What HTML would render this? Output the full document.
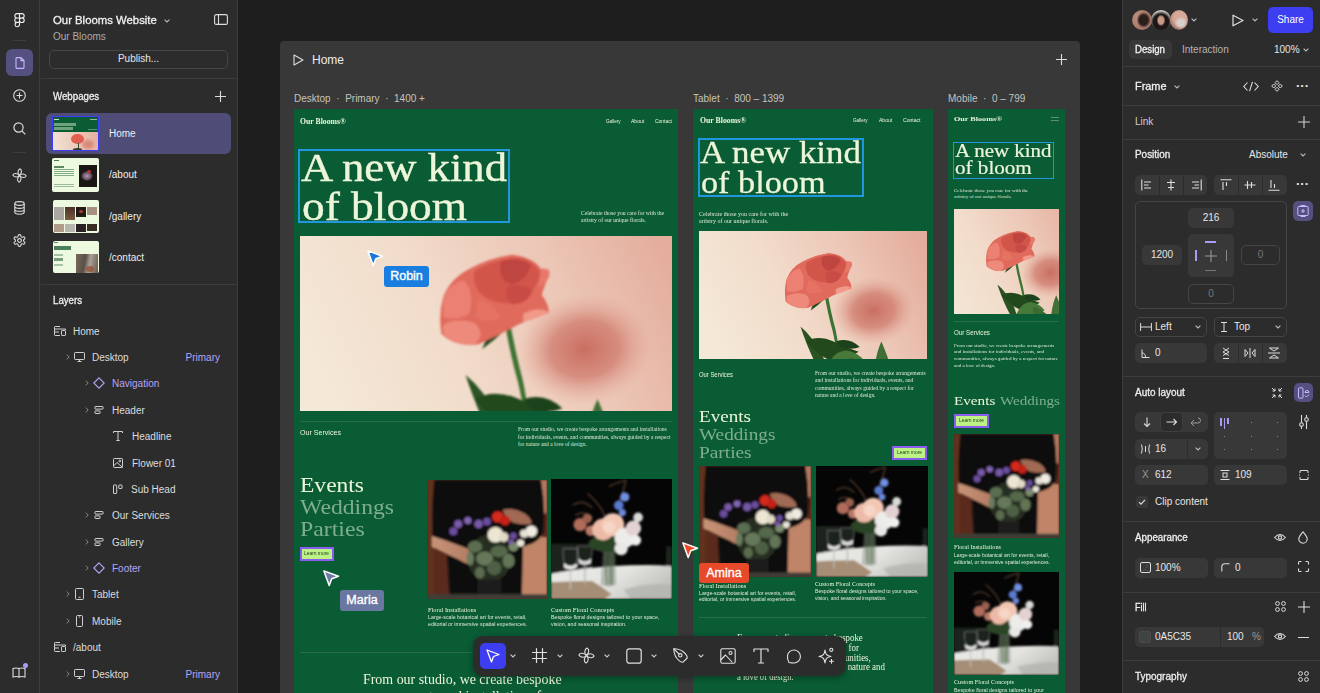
<!DOCTYPE html>
<html><head><meta charset="utf-8">
<style>
*{margin:0;padding:0;box-sizing:border-box}
html,body{width:1320px;height:693px;overflow:hidden;background:#1e1e1e;font-family:"Liberation Sans",sans-serif;color:#e6e6e6}
.a{position:absolute}
.t{position:absolute;white-space:nowrap;line-height:1}
svg{position:absolute;overflow:visible}
.serif{font-family:"Liberation Serif",serif}
/* panels */
#rail{left:0;top:0;width:40px;height:693px;background:#2c2c2c;border-right:1px solid #3c3c3c}
#lp{left:40px;top:0;width:198px;height:693px;background:#2c2c2c;border-right:1px solid #3c3c3c}
#rp{left:1122px;top:0;width:198px;height:693px;background:#2c2c2c;border-left:1px solid #3c3c3c}
.hl{position:absolute;height:1px;background:#3c3c3c}
.lbl{font-size:10px;color:#e6e6e6}
.box{position:absolute;background:#383838;border-radius:5px}
.obox{position:absolute;border:1px solid #444;border-radius:5px}
/* canvas */
#home{left:280px;top:41px;width:800px;height:660px;background:#383838;border-radius:4px}
.frame{position:absolute;background:#0a5c35;overflow:hidden}
.cream{color:#eef5dc}
.sel{position:absolute;border:2px solid #2490d8}
</style></head><body>

<!-- ============ LEFT RAIL ============ -->
<div id="rail" class="a">
 <svg style="left:14px;top:13px" width="11" height="15" viewBox="0 0 11 15" fill="none" stroke="#eee" stroke-width="1.1">
  <path d="M5.5 0.6H3A2.2 2.2 0 0 0 3 5H5.5ZM5.5 0.6H8A2.2 2.2 0 0 1 8 5H5.5ZM5.5 5H3A2.2 2.2 0 0 0 3 9.4H5.5ZM5.5 9.4H3A2.2 2.2 0 1 0 5.5 11.6ZM5.5 7.2A2.2 2.2 0 1 0 10.2 7.2A2.2 2.2 0 1 0 5.5 7.2Z"/>
 </svg>
 <div class="a" style="left:13px;top:40px;width:13px;height:1px;background:#3d3d3d"></div>
 <div class="a" style="left:6px;top:49px;width:27px;height:27px;background:#545180;border-radius:6px"></div>
 <svg style="left:15px;top:57px" width="10" height="12" viewBox="0 0 10 12" fill="none" stroke="#c7b6ff" stroke-width="1.1"><path d="M1 1.5Q1 .6 2 .6H6L9 3.6V10.4Q9 11.4 8 11.4H2Q1 11.4 1 10.4Z M6 .6V3.6H9"/></svg>
 <svg style="left:13px;top:89px" width="13" height="13" viewBox="0 0 13 13" fill="none" stroke="#ddd" stroke-width="1.1"><circle cx="6.5" cy="6.5" r="5.8"/><path d="M6.5 3.5V9.5M3.5 6.5H9.5"/></svg>
 <svg style="left:13px;top:122px" width="13" height="13" viewBox="0 0 13 13" fill="none" stroke="#ddd" stroke-width="1.2"><circle cx="5.5" cy="5.5" r="4.6"/><path d="M8.8 8.8L12.3 12.3"/></svg>
 <div class="a" style="left:13px;top:152px;width:13px;height:1px;background:#3d3d3d"></div>
 <svg style="left:12px;top:168px" width="15" height="15" viewBox="0 0 15 15" fill="none" stroke="#ddd" stroke-width="1.1" stroke-linejoin="round"><path d="M7.5 7.5C5.3 5.8 5.6 2 7.9 .8C10.2 1.8 9.8 5.6 7.5 7.5Z" transform="rotate(0 7.5 7.5)"/><path d="M7.5 7.5C5.3 5.8 5.6 2 7.9 .8C10.2 1.8 9.8 5.6 7.5 7.5Z" transform="rotate(90 7.5 7.5)"/><path d="M7.5 7.5C5.3 5.8 5.6 2 7.9 .8C10.2 1.8 9.8 5.6 7.5 7.5Z" transform="rotate(180 7.5 7.5)"/><path d="M7.5 7.5C5.3 5.8 5.6 2 7.9 .8C10.2 1.8 9.8 5.6 7.5 7.5Z" transform="rotate(270 7.5 7.5)"/></svg>
 <svg style="left:14px;top:201px" width="11" height="14" viewBox="0 0 11 14" fill="none" stroke="#ddd" stroke-width="1.1"><ellipse cx="5.5" cy="2.5" rx="4.7" ry="1.9"/><path d="M.8 2.5V11.3C.8 12.4 3 13.2 5.5 13.2S10.2 12.4 10.2 11.3V2.5M.8 5.5C.8 6.6 3 7.4 5.5 7.4S10.2 6.6 10.2 5.5M.8 8.4C.8 9.5 3 10.3 5.5 10.3S10.2 9.5 10.2 8.4"/></svg>
 <svg style="left:13px;top:234px" width="13" height="13" viewBox="0 0 13 13" fill="none" stroke="#ddd" stroke-width="1.1" stroke-linejoin="round"><circle cx="6.5" cy="6.5" r="1.9"/><path d="M6.50 0.55L6.81 0.58L7.11 0.68L7.40 0.84L7.65 1.09L7.79 1.67L7.88 2.25L8.03 2.51L8.19 2.71L8.35 2.87L8.52 2.99L8.72 3.08L8.94 3.15L9.19 3.18L9.49 3.18L10.04 2.96L10.61 2.80L10.95 2.90L11.24 3.06L11.47 3.27L11.65 3.52L11.78 3.81L11.85 4.12L11.85 4.45L11.76 4.79L11.33 5.21L10.87 5.57L10.72 5.83L10.62 6.07L10.57 6.29L10.55 6.50L10.57 6.71L10.62 6.93L10.72 7.17L10.87 7.43L11.33 7.79L11.76 8.21L11.85 8.55L11.85 8.88L11.78 9.19L11.65 9.47L11.47 9.73L11.24 9.94L10.95 10.10L10.61 10.20L10.04 10.04L9.49 9.82L9.19 9.82L8.94 9.85L8.72 9.92L8.52 10.01L8.35 10.13L8.19 10.29L8.03 10.49L7.88 10.75L7.79 11.33L7.65 11.91L7.40 12.16L7.11 12.32L6.81 12.42L6.50 12.45L6.19 12.42L5.89 12.32L5.60 12.16L5.35 11.91L5.21 11.33L5.12 10.75L4.97 10.49L4.81 10.29L4.65 10.13L4.48 10.01L4.28 9.92L4.06 9.85L3.81 9.82L3.51 9.82L2.96 10.04L2.39 10.20L2.05 10.10L1.76 9.94L1.53 9.73L1.35 9.48L1.22 9.19L1.15 8.88L1.15 8.55L1.24 8.21L1.67 7.79L2.13 7.43L2.28 7.17L2.38 6.93L2.43 6.71L2.45 6.50L2.43 6.29L2.38 6.07L2.28 5.83L2.13 5.57L1.67 5.21L1.24 4.79L1.15 4.45L1.15 4.12L1.22 3.81L1.35 3.52L1.53 3.27L1.76 3.06L2.05 2.90L2.39 2.80L2.96 2.96L3.51 3.18L3.81 3.18L4.06 3.15L4.28 3.08L4.48 2.99L4.65 2.87L4.81 2.71L4.97 2.51L5.12 2.25L5.21 1.67L5.35 1.09L5.60 0.84L5.89 0.68L6.19 0.58Z"/></svg>
 <svg style="left:12px;top:666px" width="15" height="12" viewBox="0 0 15 12" fill="none" stroke="#ddd" stroke-width="1.1"><path d="M1 2.5Q4 1.5 7 2.5V11Q4 10 1 11ZM7 2.5Q10 1.5 13 2.5V11Q10 10 7 11Z"/></svg>
 <div class="a" style="left:23px;top:663px;width:5px;height:5px;border-radius:50%;background:#a99cf5"></div>
</div>

<!-- ============ LEFT PANEL ============ -->
<div id="lp" class="a"></div>
<div class="t" style="left:53px;top:15px;font-size:11px;font-weight:normal;-webkit-text-stroke:.3px currentColor;color:#f0f0f0;transform:scaleX(1.031);transform-origin:0 50%;">Our Blooms Website</div>
<svg style="left:164px;top:19px" width="6" height="4" viewBox="0 0 6 4" fill="none" stroke="#bbb" stroke-width="1.1"><path d="M.6 .6L3 3L5.4 .6"/></svg>
<svg style="left:214px;top:14px" width="14" height="11" viewBox="0 0 14 11" fill="none" stroke="#ddd" stroke-width="1.1"><rect x=".6" y=".6" width="12.8" height="9.8" rx="1.5"/><path d="M4.5 .6V10.4"/></svg>
<div class="t" style="left:53px;top:32px;font-size:10px;color:#aaa">Our Blooms</div>
<div class="obox" style="left:49px;top:50px;width:179px;height:19px;border-color:#474747"></div>
<div class="t" style="left:49px;top:54px;width:179px;text-align:center;font-size:10px;color:#e8e8e8">Publish...</div>
<div class="hl" style="left:41px;top:78px;width:197px"></div>
<div class="t" style="left:53px;top:92px;font-size:10px;font-weight:normal;-webkit-text-stroke:.3px currentColor;color:#eee;transform:scaleX(0.970);transform-origin:0 50%;">Webpages</div>
<svg style="left:215px;top:91px" width="11" height="11" viewBox="0 0 11 11" fill="none" stroke="#ddd" stroke-width="1.1"><path d="M5.5 0V11M0 5.5H11"/></svg>
<div class="a" style="left:46px;top:113px;width:185px;height:41px;background:#4f4c78;border-radius:6px"></div>
<div class="a" style="left:52px;top:116px;width:47px;height:35px;border:1px solid #3d3dff;background:#0a5c35;overflow:hidden;border-radius:1px">
  <div class="a" style="left:0;top:15px;width:45px;height:19px;background:linear-gradient(80deg,#f1e4d6,#ecc4b4 60%,#e6b0a0)"></div>
  <div class="a" style="left:1px;top:1.5px;width:5px;height:1px;background:#cfe0c0"></div>
  <div class="a" style="left:37px;top:1.5px;width:7px;height:1px;background:#9ab8a0"></div>
  <div class="a" style="left:1px;top:5.5px;width:22px;height:3px;background:#d8e8c8;opacity:.5"></div>
  <div class="a" style="left:1px;top:10px;width:19px;height:3px;background:#d8e8c8;opacity:.5"></div>
  <div class="a" style="left:35px;top:12px;width:9px;height:1px;background:#9ab8a0;opacity:.6"></div>
  <div class="a" style="left:29px;top:23px;width:12px;height:9px;border-radius:50%;background:#d88a7a;filter:blur(1.5px)"></div>
  <div class="a" style="left:18px;top:17px;width:13px;height:10px;border-radius:50%;background:#e25e50"></div>
  <div class="a" style="left:25px;top:26px;width:1px;height:8px;background:#3a4a30"></div>
  <div class="a" style="left:20px;top:31px;width:9px;height:3px;border-radius:50%;background:#2e3a28"></div>
 </div><div class="t" style="left:109px;top:128.5px;font-size:10px;color:#eee">Home</div>
<div class="a" style="left:52px;top:158px;width:47px;height:34px;background:#eefadf;border-radius:2px;overflow:hidden">
  <div class="a" style="left:2px;top:1.5px;width:5px;height:1px;background:#4a7a55"></div>
  <div class="a" style="left:2px;top:8px;width:10px;height:1.5px;background:#3a6a45;opacity:.8"></div>
  <div class="a" style="left:2px;top:11px;width:20px;height:7px;background:repeating-linear-gradient(#6a9a70 0 1px,transparent 1px 2px);opacity:.8"></div>
  <div class="a" style="left:2px;top:26px;width:20px;height:4px;background:repeating-linear-gradient(#7aa080 0 1px,transparent 1px 2px);opacity:.7"></div>
  <div class="a" style="left:27px;top:7px;width:18px;height:22px;background:#1a1614"></div>
  <div class="a" style="left:29px;top:13px;width:12px;height:10px;background:radial-gradient(#a89ab8,#6a5060 50%,transparent 72%)"></div>
  <div class="a" style="left:35px;top:12px;width:4px;height:3px;background:#c03030;border-radius:50%"></div>
 </div><div class="t" style="left:109px;top:170.0px;font-size:10px;color:#eee">/about</div>
<div class="a" style="left:53px;top:200px;width:46px;height:33px;background:#eefadf;border-radius:2px;overflow:hidden">
  <div class="a" style="left:1px;top:7px;width:10px;height:13px;background:#aaa6a2"></div>
  <div class="a" style="left:12px;top:7px;width:10px;height:13px;background:linear-gradient(#4a3028,#7a5a40)"></div>
  <div class="a" style="left:23px;top:7px;width:10px;height:10px;background:#231a18"></div>
  <div class="a" style="left:26px;top:10px;width:4px;height:3px;background:#a04030;border-radius:50%"></div>
  <div class="a" style="left:34px;top:7px;width:10px;height:8px;background:#a89080"></div>
  <div class="a" style="left:1px;top:24px;width:10px;height:8px;background:#b09a88"></div>
  <div class="a" style="left:12px;top:24px;width:10px;height:8px;background:#b8b4b0"></div>
  <div class="a" style="left:23px;top:24px;width:10px;height:8px;background:#2a2222"></div>
  <div class="a" style="left:34px;top:24px;width:10px;height:7px;background:#3a2c24"></div>
 </div><div class="t" style="left:109px;top:211.5px;font-size:10px;color:#eee">/gallery</div>
<div class="a" style="left:53px;top:241px;width:46px;height:32px;background:#eefadf;border-radius:2px;overflow:hidden">
  <div class="a" style="left:1px;top:1px;width:4px;height:1px;background:#6a8a70"></div>
  <div class="a" style="left:1px;top:5px;width:17px;height:4px;background:#2e6a45;opacity:.85"></div>
  <div class="a" style="left:1px;top:13px;width:9px;height:1.5px;background:#a8c0a8"></div>
  <div class="a" style="left:1px;top:17px;width:9px;height:3px;background:#5a8a65;opacity:.8"></div>
  <div class="a" style="left:1px;top:23px;width:9px;height:2px;background:#9ab8a0;opacity:.8"></div>
  <div class="a" style="left:23px;top:13px;width:22px;height:19px;background:linear-gradient(100deg,#7a6a5a,#5a5048 40%,#a8a098 60%,#6a5a4a)"></div>
  <div class="a" style="left:33px;top:25px;width:8px;height:6px;background:#9a4a30;border-radius:50%;opacity:.7"></div>
 </div><div class="t" style="left:109px;top:253.0px;font-size:10px;color:#eee">/contact</div>
<div class="hl" style="left:41px;top:284px;width:197px"></div>
<div class="t" style="left:53px;top:296px;font-size:10px;font-weight:normal;-webkit-text-stroke:.3px currentColor;color:#eee;transform:scaleX(0.969);transform-origin:0 50%;">Layers</div>


<svg style="left:54px;top:326px" width="12" height="10" viewBox="0 0 12 10" fill="none" stroke="#d0d0d0" stroke-width="1"><path d="M6 .5H1.2Q.5 .5 .5 1.2V8.8Q.5 9.5 1.2 9.5H6M.5 3H11.5V4M.5 6H5"/><rect x="7.5" y="4.5" width="4" height="5" rx=".6"/></svg><div class="t" style="left:73px;top:326.8px;font-size:10px;color:#dcdcdc">Home</div>
<svg style="left:66px;top:354px" width="4" height="6" viewBox="0 0 4 6" fill="none" stroke="#8a8a8a" stroke-width="1"><path d="M.8 .6L3.2 3L.8 5.4"/></svg><svg style="left:74px;top:352px" width="11" height="10" viewBox="0 0 11 10" fill="none" stroke="#d0d0d0" stroke-width="1"><rect x=".5" y=".5" width="10" height="7" rx=".8"/><path d="M3.5 9.5H7.5M5.5 7.5V9.5"/></svg><div class="t" style="left:92px;top:353.3px;font-size:10px;color:#dcdcdc">Desktop</div>
<div class="t" style="left:160px;width:60px;text-align:right;top:353.3px;font-size:10px;color:#b7a3f5">Primary</div>
<svg style="left:85px;top:380px" width="4" height="6" viewBox="0 0 4 6" fill="none" stroke="#8a8a8a" stroke-width="1"><path d="M.8 .6L3.2 3L.8 5.4"/></svg><svg style="left:93px;top:377px" width="12" height="12" viewBox="0 0 12 12" fill="none" stroke="#b7a3f5" stroke-width="1.1"><path d="M6 .8L11.2 6L6 11.2L.8 6Z"/></svg><div class="t" style="left:112px;top:379.3px;font-size:10px;color:#b7a3f5">Navigation</div>
<svg style="left:85px;top:407px" width="4" height="6" viewBox="0 0 4 6" fill="none" stroke="#8a8a8a" stroke-width="1"><path d="M.8 .6L3.2 3L.8 5.4"/></svg><svg style="left:94px;top:405px" width="10" height="10" viewBox="0 0 10 10" fill="none" stroke="#d0d0d0" stroke-width="1"><rect x="1" y="1.5" width="8" height="2.6" rx=".4"/><rect x="1" y="5.9" width="5" height="2.6" rx=".4"/></svg><div class="t" style="left:112px;top:405.8px;font-size:10px;color:#dcdcdc">Header</div>
<svg style="left:113px;top:431px" width="10" height="10" viewBox="0 0 10 10" fill="none" stroke="#d0d0d0" stroke-width="1"><path d="M.5 2V.5H9.5V2M5 .5V9.5M3.3 9.5H6.7"/></svg><div class="t" style="left:132px;top:432.3px;font-size:10px;color:#dcdcdc">Headline</div>
<svg style="left:113px;top:458px" width="10" height="10" viewBox="0 0 10 10" fill="none" stroke="#d0d0d0" stroke-width="1"><rect x=".5" y=".5" width="9" height="9" rx=".8"/><path d="M.5 8L4 4.5L9.5 9.5"/><circle cx="6.8" cy="3" r=".9"/></svg><div class="t" style="left:132px;top:458.8px;font-size:10px;color:#dcdcdc">Flower 01</div>
<svg style="left:113px;top:484px" width="10" height="10" viewBox="0 0 10 10" fill="none" stroke="#d0d0d0" stroke-width="1"><rect x=".5" y="1" width="3.2" height="8.5" rx=".4"/><rect x="5.8" y="1" width="3.2" height="3.5" rx=".4"/></svg><div class="t" style="left:131px;top:484.8px;font-size:10px;color:#dcdcdc">Sub Head</div>
<svg style="left:85px;top:512px" width="4" height="6" viewBox="0 0 4 6" fill="none" stroke="#8a8a8a" stroke-width="1"><path d="M.8 .6L3.2 3L.8 5.4"/></svg><svg style="left:94px;top:510px" width="10" height="10" viewBox="0 0 10 10" fill="none" stroke="#d0d0d0" stroke-width="1"><rect x="1" y="1.5" width="8" height="2.6" rx=".4"/><rect x="1" y="5.9" width="5" height="2.6" rx=".4"/></svg><div class="t" style="left:112px;top:511.3px;font-size:10px;color:#dcdcdc">Our Services</div>
<svg style="left:85px;top:539px" width="4" height="6" viewBox="0 0 4 6" fill="none" stroke="#8a8a8a" stroke-width="1"><path d="M.8 .6L3.2 3L.8 5.4"/></svg><svg style="left:94px;top:537px" width="10" height="10" viewBox="0 0 10 10" fill="none" stroke="#d0d0d0" stroke-width="1"><rect x="1" y="1.5" width="8" height="2.6" rx=".4"/><rect x="1" y="5.9" width="5" height="2.6" rx=".4"/></svg><div class="t" style="left:112px;top:537.8px;font-size:10px;color:#dcdcdc">Gallery</div>
<svg style="left:85px;top:565px" width="4" height="6" viewBox="0 0 4 6" fill="none" stroke="#8a8a8a" stroke-width="1"><path d="M.8 .6L3.2 3L.8 5.4"/></svg><svg style="left:93px;top:562px" width="12" height="12" viewBox="0 0 12 12" fill="none" stroke="#b7a3f5" stroke-width="1.1"><path d="M6 .8L11.2 6L6 11.2L.8 6Z"/></svg><div class="t" style="left:112px;top:563.8px;font-size:10px;color:#b7a3f5">Footer</div>
<svg style="left:66px;top:591px" width="4" height="6" viewBox="0 0 4 6" fill="none" stroke="#8a8a8a" stroke-width="1"><path d="M.8 .6L3.2 3L.8 5.4"/></svg><svg style="left:75px;top:588px" width="9" height="12" viewBox="0 0 9 12" fill="none" stroke="#d0d0d0" stroke-width="1"><rect x=".5" y=".5" width="8" height="11" rx="1"/><path d="M3.5 9.3H5.5"/></svg><div class="t" style="left:92px;top:590.3px;font-size:10px;color:#dcdcdc">Tablet</div>
<svg style="left:66px;top:618px" width="4" height="6" viewBox="0 0 4 6" fill="none" stroke="#8a8a8a" stroke-width="1"><path d="M.8 .6L3.2 3L.8 5.4"/></svg><svg style="left:76px;top:615px" width="7" height="12" viewBox="0 0 7 12" fill="none" stroke="#d0d0d0" stroke-width="1"><rect x=".5" y=".5" width="6" height="11" rx="1"/><path d="M2.8 2H4.2"/></svg><div class="t" style="left:92px;top:616.8px;font-size:10px;color:#dcdcdc">Mobile</div>
<svg style="left:54px;top:642px" width="12" height="10" viewBox="0 0 12 10" fill="none" stroke="#d0d0d0" stroke-width="1"><path d="M6 .5H1.2Q.5 .5 .5 1.2V8.8Q.5 9.5 1.2 9.5H6M.5 3H11.5V4M.5 6H5"/><rect x="7.5" y="4.5" width="4" height="5" rx=".6"/></svg><div class="t" style="left:73px;top:642.8px;font-size:10px;color:#dcdcdc">/about</div>
<svg style="left:66px;top:671px" width="4" height="6" viewBox="0 0 4 6" fill="none" stroke="#8a8a8a" stroke-width="1"><path d="M.8 .6L3.2 3L.8 5.4"/></svg><svg style="left:74px;top:669px" width="11" height="10" viewBox="0 0 11 10" fill="none" stroke="#d0d0d0" stroke-width="1"><rect x=".5" y=".5" width="10" height="7" rx=".8"/><path d="M3.5 9.5H7.5M5.5 7.5V9.5"/></svg><div class="t" style="left:92px;top:669.8px;font-size:10px;color:#dcdcdc">Desktop</div>
<div class="t" style="left:160px;width:60px;text-align:right;top:669.8px;font-size:10px;color:#b7a3f5">Primary</div>

<!-- ============ CANVAS ============ -->
<div id="home" class="a"></div>
<svg style="left:293px;top:54px" width="11" height="12" viewBox="0 0 11 12" fill="none" stroke="#ddd" stroke-width="1.1"><path d="M1 1L10 6L1 11Z" stroke-linejoin="round"/></svg>
<div class="t" style="left:312px;top:53.72px;font-size:12px;color:#ececec;font-weight:normal;">Home</div>
<svg style="left:1056px;top:54px" width="11" height="11" viewBox="0 0 11 11" fill="none" stroke="#ddd" stroke-width="1.1"><path d="M5.5 0V11M0 5.5H11"/></svg>
<div class="t" style="left:294px;top:94.18px;font-size:10px;color:#c4c4bc;font-weight:normal;">Desktop &nbsp;·&nbsp; Primary &nbsp;·&nbsp; 1400 +</div>
<div class="t" style="left:693px;top:93.68px;font-size:10px;color:#c4c4bc;font-weight:normal;">Tablet &nbsp;·&nbsp; 800 – 1399</div>
<div class="t" style="left:948px;top:93.68px;font-size:10px;color:#c4c4bc;font-weight:normal;">Mobile &nbsp;·&nbsp; 0 – 799</div>
<div class="frame" style="left:294px;top:109px;width:384px;height:600px">
<div class="t" style="left:6px;top:8.70px;font-size:7.5px;color:#eef6da;font-weight:bold;font-family:'Liberation Serif',serif;transform:scaleX(1.028);transform-origin:0 50%;">Our Blooms®</div>
<div class="t" style="left:312px;top:9.85px;font-size:5.5px;color:#eef6da;font-weight:normal;transform:scaleX(0.838);transform-origin:0 50%;">Gallery</div>
<div class="t" style="left:337px;top:9.85px;font-size:5.5px;color:#eef6da;font-weight:normal;transform:scaleX(0.918);transform-origin:0 50%;">About</div>
<div class="t" style="left:361px;top:9.85px;font-size:5.5px;color:#eef6da;font-weight:normal;transform:scaleX(0.896);transform-origin:0 50%;">Contact</div>
<div class="t" style="left:6.800000000000011px;top:37.98px;font-size:41px;color:#eef6da;font-weight:normal;font-family:'Liberation Serif',serif;-webkit-text-stroke:.4px #eef6da;transform:scaleX(1.090);transform-origin:0 50%;">A new kind</div>
<div class="t" style="left:7.5px;top:76.68px;font-size:41px;color:#eef6da;font-weight:normal;font-family:'Liberation Serif',serif;-webkit-text-stroke:.4px #eef6da;transform:scaleX(1.106);transform-origin:0 50%;">of bloom</div>
<div class="a" style="left:4px;top:40px;width:212px;height:74px;background:transparent;border:2px solid #2196e0"></div>
<div class="t" style="left:287px;top:101.51px;font-size:5.5px;color:#dfe9d4;font-weight:normal;font-family:'Liberation Serif',serif;transform:scaleX(1.022);transform-origin:0 50%;">Celebrate those you care for with the</div>
<div class="t" style="left:287px;top:108.71px;font-size:5.5px;color:#dfe9d4;font-weight:normal;font-family:'Liberation Serif',serif;transform:scaleX(1.022);transform-origin:0 50%;">artistry of our unique florals.</div>
<div class="a" style="left:6px;top:127px;width:372px;height:175px;overflow:hidden"><svg style="left:0;top:0" width="372" height="175" viewBox="0.0 81.3 1000.0 470.4" preserveAspectRatio="none">
<defs>
<linearGradient id="pg1" x1="0" y1=".55" x2="1" y2=".25"><stop offset="0" stop-color="#f4e8d6"/><stop offset=".35" stop-color="#f2dccb"/><stop offset=".7" stop-color="#ecc6b6"/><stop offset="1" stop-color="#e4ad9c"/></linearGradient>
<radialGradient id="pr1" cx=".5" cy=".5" r=".5"><stop offset="0" stop-color="#c86a5c" stop-opacity=".95"/><stop offset=".5" stop-color="#cf7a6c" stop-opacity=".75"/><stop offset="1" stop-color="#e4a898" stop-opacity="0"/></radialGradient>
<filter id="ps1" x="-10%" y="-10%" width="120%" height="120%"><feGaussianBlur stdDeviation="2.2"/></filter>
</defs>
<rect x="0" y="0" width="1000" height="633" fill="url(#pg1)"/>
<ellipse cx="765" cy="385" rx="185" ry="150" fill="url(#pr1)" transform="rotate(-8 765 385)"/>
<g filter="url(#ps1)">
 <path d="M548 300 Q565 400 585 470 Q600 530 612 633 L624 633 Q612 530 598 465 Q580 400 562 300Z" fill="#3c7232"/>
 <path d="M520 633 Q480 560 445 455 Q500 500 545 590 L560 633Z" fill="#2a5224"/>
 <path d="M470 520 Q520 490 590 520 Q640 545 700 565 Q650 600 600 610 Q540 600 470 520Z" fill="#234a1f"/>
 <path d="M560 633 Q590 560 650 560 Q700 570 730 610 L700 633Z" fill="#47793a"/>
 <path d="M600 520 Q660 500 705 545 Q670 560 620 545Z" fill="#1f421b"/>
 <path d="M660 590 Q700 600 740 633 L660 633Z" fill="#3a6a30"/>
 <path d="M770 633 Q780 560 800 520 Q830 590 840 633Z" fill="#3f7034"/>
 <path d="M530 318 Q500 350 490 385 Q525 360 555 330Z" fill="#244c20"/>
 <path d="M520 300 Q560 285 600 305 Q580 325 540 322Z" fill="#2a5a24"/>
 <path d="M380 345 Q372 290 385 245 Q405 195 455 170 Q510 140 570 132 Q625 138 648 170 Q672 165 668 190 Q655 220 650 240 Q672 270 668 288 Q630 300 590 318 Q540 345 480 372 Q420 382 380 345Z" fill="#e06a5b"/>
 <path d="M470 175 Q530 140 590 140 Q635 150 645 185 Q630 240 590 260 Q530 270 490 240 Q460 210 470 175Z" fill="#d2544a"/>
 <path d="M540 150 Q590 135 620 160 Q610 200 570 210 Q530 200 540 150Z" fill="#bf4540"/>
 <path d="M560 215 Q600 205 625 230 Q610 265 570 265 Q545 245 560 215Z" fill="#c94c44"/>
 <path d="M385 250 Q400 210 440 200 Q470 230 455 290 Q420 310 385 300Z" fill="#ec8072"/>
 <path d="M385 320 Q420 300 470 315 Q500 345 470 372 Q420 380 385 345Z" fill="#ee8a7b"/>
 <path d="M600 290 Q640 270 668 285 Q640 305 600 312Z" fill="#f29a8a"/>
 <path d="M648 175 Q675 160 670 190 Q655 215 640 220Z" fill="#e7786a"/>
 <path d="M480 250 Q520 260 540 300 Q500 320 470 300Z" fill="#e57264"/>
</g>
</svg></div>
<div class="a" style="left:6px;top:312px;width:372px;height:1px;background:#2a6c49;"></div>
<div class="t" style="left:6px;top:319.93px;font-size:7px;color:#eef6da;font-weight:normal;transform:scaleX(1.013);transform-origin:0 50%;">Our Services</div>
<div class="t" style="left:224px;top:318.21px;font-size:5.5px;color:#dfe9d4;font-weight:normal;font-family:'Liberation Serif',serif;transform:scaleX(1.013);transform-origin:0 50%;">From our studio, we create bespoke arrangements and installations</div>
<div class="t" style="left:224px;top:325.71px;font-size:5.5px;color:#dfe9d4;font-weight:normal;font-family:'Liberation Serif',serif;transform:scaleX(1.006);transform-origin:0 50%;">for individuals, events, and communities, always guided by a respect</div>
<div class="t" style="left:224px;top:333.21px;font-size:5.5px;color:#dfe9d4;font-weight:normal;font-family:'Liberation Serif',serif;transform:scaleX(1.000);transform-origin:0 50%;">for nature and a love of design.</div>
<div class="t" style="left:6px;top:365.72px;font-size:20.7px;color:#eef6da;font-weight:normal;font-family:'Liberation Serif',serif;transform:scaleX(1.137);transform-origin:0 50%;">Events</div>
<div class="t" style="left:6px;top:388.02px;font-size:20.7px;color:#7fae8c;font-weight:normal;font-family:'Liberation Serif',serif;transform:scaleX(1.143);transform-origin:0 50%;">Weddings</div>
<div class="t" style="left:6px;top:410.02px;font-size:20.7px;color:#7fae8c;font-weight:normal;font-family:'Liberation Serif',serif;transform:scaleX(1.149);transform-origin:0 50%;">Parties</div>
<div class="a" style="left:6px;top:438px;width:34px;height:14px;background:#bdf285;border:2px solid #8a5cf0;box-sizing:border-box"></div>
<div class="t" style="left:10px;top:442.83px;font-size:4.5px;color:#1a3a20;font-weight:normal;transform:scaleX(1.086);transform-origin:0 50%;">Learn more</div>
<div class="a" style="left:133px;top:371px;width:120px;height:119px;overflow:hidden"><svg style="left:0;top:0" width="120" height="119" viewBox="0 0 100 100" preserveAspectRatio="none">
<defs><filter id="fb2" x="-5%" y="-5%" width="110%" height="110%"><feGaussianBlur stdDeviation=".9"/></filter>
<linearGradient id="fsk2" x1="0" y1="0" x2="1" y2="0"><stop offset="0" stop-color="#c89478"/><stop offset="1" stop-color="#b07a60"/></linearGradient></defs>
<rect width="100" height="100" fill="#5a2a1c"/>
<g filter="url(#fb2)">
<path d="M78 48H100V100H78Z" fill="#c08468"/>
<path d="M92 0H100V28H92Z" fill="#b47a60"/>
<path d="M0 0H6V100H0Z" fill="#62301f"/>
<path d="M6 0H95Q99 22 97 44Q93 52 86 54L80 56L79 100H19L17 62Q8 60 5 52Q3 28 6 0Z" fill="#0e0d0d"/>
<path d="M4 47Q14 50 24 54Q30 56 37 59Q42 64 40 70Q34 72 27 67Q16 62 4 56Z" fill="url(#fsk2)"/>
<path d="M63 25Q72 23 81 28Q88 33 87 37Q80 38 72 36Q65 32 63 25Z" fill="#a06a54"/>
<ellipse cx="52" cy="66" rx="18" ry="20" fill="#262d22"/>
<ellipse cx="40" cy="56" rx="6" ry="5" fill="#5a6e50"/><ellipse cx="48" cy="66" rx="7" ry="6" fill="#66785a"/>
<ellipse cx="60" cy="60" rx="7" ry="5" fill="#55684a"/><ellipse cx="56" cy="74" rx="6" ry="6" fill="#4e6044"/>
<ellipse cx="68" cy="68" rx="5" ry="6" fill="#627456"/><ellipse cx="44" cy="78" rx="4" ry="5" fill="#5a6c4e"/>
<ellipse cx="36" cy="66" rx="3" ry="6" fill="#6a7c5e"/><ellipse cx="72" cy="56" rx="4" ry="4" fill="#7a8a6a"/>
<circle cx="26" cy="37" r="3.3" fill="#7a5aaa"/><circle cx="22" cy="43" r="3.3" fill="#6c4e9e"/>
<circle cx="34" cy="34" r="3" fill="#8266b4"/><circle cx="43" cy="37" r="3.6" fill="#7558a8"/><circle cx="50" cy="35" r="3.2" fill="#6a4d9e"/>
<circle cx="59" cy="31" r="4.8" fill="#d42a1e"/><circle cx="65" cy="34" r="4.2" fill="#c42418"/>
<circle cx="57" cy="46" r="6.5" fill="#ece6d2"/><circle cx="64" cy="48" r="4" fill="#e2dac8"/>
<circle cx="87" cy="43" r="4.8" fill="#f0ece2"/><circle cx="81" cy="45" r="3.5" fill="#e6e0d6"/>
<circle cx="78" cy="53" r="3" fill="#ece6dc"/>
<circle cx="72" cy="47" r="2.8" fill="#6b4c9c"/><circle cx="70" cy="52" r="2.3" fill="#7a5aa8"/>
<path d="M42 84H62V97H42Z" fill="#1a1a1c"/>
<path d="M0 96H100V100H0Z" fill="#403d38"/>
</g>
</svg></div>
<div class="a" style="left:257px;top:370px;width:121px;height:120px;overflow:hidden"><svg style="left:0;top:0" width="121" height="120" viewBox="0 0 100 100" preserveAspectRatio="none">
<defs><filter id="tb3" x="-5%" y="-5%" width="110%" height="110%"><feGaussianBlur stdDeviation=".8"/></filter>
<linearGradient id="tg3" x1="0" x2="1" y1="0" y2=".4"><stop offset="0" stop-color="#e8e8e4"/><stop offset=".6" stop-color="#e4e4e0"/><stop offset="1" stop-color="#c4c4c0"/></linearGradient></defs>
<rect width="100" height="100" fill="#050505"/>
<g filter="url(#tb3)">
<path d="M0 54H34V82H0Z" fill="#1a201d"/>
<path d="M95 56H100V74H95Z" fill="#1a201d"/>
<path d="M0 79Q30 73 60 72Q95 71 100 73V100H0Z" fill="url(#tg3)"/>
<path d="M60 92Q82 86 100 88V100H66Z" fill="#b0b0ac" opacity=".7"/>
<path d="M0 86Q20 85 34 85L42 90L50 96L44 100H0Z" fill="#a68e76"/>
<path d="M10 58Q9 72 16 76Q23 72 22 58Z" fill="none" stroke="#9a9a98" stroke-width=".8" opacity=".6"/>
<path d="M22 56Q21 69 28 72Q35 69 34 56Z" fill="none" stroke="#9a9a98" stroke-width=".8" opacity=".5"/>
<path d="M10.5 70Q16 75 22 70L21 74Q16 77 11 74Z" fill="#e8e8e8"/>
<path d="M22.5 66Q28 71 33.5 66L33 70Q28 73 23 70Z" fill="#e0e0e0"/>
<rect x="15.5" y="76" width="1" height="16" fill="#c0c0c0"/><rect x="27.5" y="72" width="1" height="16" fill="#b0b0b0"/>
<path d="M43 58L41 88Q48 92 54 88L53 58Z" fill="#7a867a" opacity=".45"/>
<path d="M45 58L46 88M48.5 58L48.5 88M51 58L50.5 88" stroke="#4a6a3a" stroke-width="1" fill="none"/>
<path d="M18 22Q26 16 34 24M48 6Q54 3 62 1M30 12Q40 20 44 30M20 30Q28 26 34 32M62 1Q60 10 56 20" stroke="#4a3226" stroke-width="1.4" fill="none"/>
<ellipse cx="46" cy="54" rx="15" ry="7" fill="#2c4426"/>
<circle cx="24" cy="38" r="5.5" fill="#b06c5a"/><circle cx="30" cy="33" r="4" fill="#9a5e4e"/><circle cx="33" cy="43" r="4.5" fill="#b87866"/>
<circle cx="43" cy="42" r="9" fill="#ecbaa6"/><circle cx="51" cy="38" r="9.5" fill="#f2c8b4"/><circle cx="48" cy="40" r="5" fill="#f6d6c6"/>
<circle cx="61" cy="49" r="8.5" fill="#ececea"/><circle cx="68" cy="41" r="6.5" fill="#e4d2d2"/>
<circle cx="72" cy="32" r="4" fill="#d8dcd6"/><circle cx="58" cy="58" r="5.5" fill="#e8e8e6"/><circle cx="70" cy="51" r="4.5" fill="#f0f0ee"/>
<circle cx="56" cy="22" r="4" fill="#5a7ad0"/><circle cx="61" cy="15" r="3.8" fill="#7090e0"/><circle cx="59" cy="28" r="3" fill="#6a88d8"/>
</g>
</svg></div>
<div class="t" style="left:133.5px;top:498.16px;font-size:6px;color:#eef6da;font-weight:normal;font-family:'Liberation Serif',serif;transform:scaleX(1.067);transform-origin:0 50%;">Floral Installations</div>
<div class="t" style="left:133.5px;top:506.45px;font-size:5.5px;color:#dfe9d4;font-weight:normal;transform:scaleX(0.962);transform-origin:0 50%;">Large-scale botanical art for events, retail,</div>
<div class="t" style="left:133.5px;top:512.95px;font-size:5.5px;color:#dfe9d4;font-weight:normal;transform:scaleX(0.967);transform-origin:0 50%;">editorial or immersive spatial experiences.</div>
<div class="t" style="left:257.4px;top:498.16px;font-size:6px;color:#eef6da;font-weight:normal;font-family:'Liberation Serif',serif;transform:scaleX(1.080);transform-origin:0 50%;">Custom Floral Concepts</div>
<div class="t" style="left:257.4px;top:506.45px;font-size:5.5px;color:#dfe9d4;font-weight:normal;transform:scaleX(0.978);transform-origin:0 50%;">Bespoke floral designs tailored to your space,</div>
<div class="t" style="left:257.4px;top:512.95px;font-size:5.5px;color:#dfe9d4;font-weight:normal;transform:scaleX(0.967);transform-origin:0 50%;">vision, and seasonal inspiration.</div>
<div class="a" style="left:6px;top:542.5px;width:372px;height:1.0px;background:#2a6c49;"></div>
<div class="t" style="left:68.69999999999999px;top:563.71px;font-size:14px;color:#eef6da;font-weight:normal;font-family:'Liberation Serif',serif;transform:scaleX(0.994);transform-origin:0 50%;">From our studio, we create bespoke</div>
<div class="t" style="left:68.69999999999999px;top:581.41px;font-size:14px;color:#eef6da;font-weight:normal;font-family:'Liberation Serif',serif;transform:scaleX(0.999);transform-origin:0 50%;">arrangements and installations for</div>
</div>
<div class="frame" style="left:693px;top:109px;width:240px;height:600px">
<div class="t" style="left:6.5px;top:7.50px;font-size:7.5px;color:#eef6da;font-weight:bold;font-family:'Liberation Serif',serif;transform:scaleX(1.035);transform-origin:0 50%;">Our Blooms®</div>
<div class="t" style="left:160.39999999999998px;top:8.85px;font-size:5.5px;color:#eef6da;font-weight:normal;transform:scaleX(0.838);transform-origin:0 50%;">Gallery</div>
<div class="t" style="left:185.79999999999995px;top:8.85px;font-size:5.5px;color:#eef6da;font-weight:normal;transform:scaleX(0.918);transform-origin:0 50%;">About</div>
<div class="t" style="left:209.89999999999998px;top:8.85px;font-size:5.5px;color:#eef6da;font-weight:normal;transform:scaleX(0.923);transform-origin:0 50%;">Contact</div>
<div class="t" style="left:7.2999999999999545px;top:28.45px;font-size:31.5px;color:#eef6da;font-weight:normal;font-family:'Liberation Serif',serif;-webkit-text-stroke:.3px #eef6da;transform:scaleX(1.108);transform-origin:0 50%;">A new kind</div>
<div class="t" style="left:7.7999999999999545px;top:57.65px;font-size:31.5px;color:#eef6da;font-weight:normal;font-family:'Liberation Serif',serif;-webkit-text-stroke:.3px #eef6da;transform:scaleX(1.087);transform-origin:0 50%;">of bloom</div>
<div class="a" style="left:5px;top:29px;width:166px;height:59px;background:transparent;border:2px solid #2196e0"></div>
<div class="t" style="left:6px;top:101.66px;font-size:6px;color:#dfe9d4;font-weight:normal;font-family:'Liberation Serif',serif;transform:scaleX(1.006);transform-origin:0 50%;">Celebrate those you care for with the</div>
<div class="t" style="left:6px;top:108.76px;font-size:6px;color:#dfe9d4;font-weight:normal;font-family:'Liberation Serif',serif;transform:scaleX(1.001);transform-origin:0 50%;">artistry of our unique florals.</div>
<div class="a" style="left:6px;top:122px;width:228px;height:128px;overflow:hidden"><svg style="left:0;top:0" width="228" height="128" viewBox="0.0 35.8 1000.0 561.4" preserveAspectRatio="none">
<defs>
<linearGradient id="pg4" x1="0" y1=".55" x2="1" y2=".25"><stop offset="0" stop-color="#f4e8d6"/><stop offset=".35" stop-color="#f2dccb"/><stop offset=".7" stop-color="#ecc6b6"/><stop offset="1" stop-color="#e4ad9c"/></linearGradient>
<radialGradient id="pr4" cx=".5" cy=".5" r=".5"><stop offset="0" stop-color="#c86a5c" stop-opacity=".95"/><stop offset=".5" stop-color="#cf7a6c" stop-opacity=".75"/><stop offset="1" stop-color="#e4a898" stop-opacity="0"/></radialGradient>
<filter id="ps4" x="-10%" y="-10%" width="120%" height="120%"><feGaussianBlur stdDeviation="2.2"/></filter>
</defs>
<rect x="0" y="0" width="1000" height="633" fill="url(#pg4)"/>
<ellipse cx="765" cy="385" rx="185" ry="150" fill="url(#pr4)" transform="rotate(-8 765 385)"/>
<g filter="url(#ps4)">
 <path d="M548 300 Q565 400 585 470 Q600 530 612 633 L624 633 Q612 530 598 465 Q580 400 562 300Z" fill="#3c7232"/>
 <path d="M520 633 Q480 560 445 455 Q500 500 545 590 L560 633Z" fill="#2a5224"/>
 <path d="M470 520 Q520 490 590 520 Q640 545 700 565 Q650 600 600 610 Q540 600 470 520Z" fill="#234a1f"/>
 <path d="M560 633 Q590 560 650 560 Q700 570 730 610 L700 633Z" fill="#47793a"/>
 <path d="M600 520 Q660 500 705 545 Q670 560 620 545Z" fill="#1f421b"/>
 <path d="M660 590 Q700 600 740 633 L660 633Z" fill="#3a6a30"/>
 <path d="M770 633 Q780 560 800 520 Q830 590 840 633Z" fill="#3f7034"/>
 <path d="M530 318 Q500 350 490 385 Q525 360 555 330Z" fill="#244c20"/>
 <path d="M520 300 Q560 285 600 305 Q580 325 540 322Z" fill="#2a5a24"/>
 <path d="M380 345 Q372 290 385 245 Q405 195 455 170 Q510 140 570 132 Q625 138 648 170 Q672 165 668 190 Q655 220 650 240 Q672 270 668 288 Q630 300 590 318 Q540 345 480 372 Q420 382 380 345Z" fill="#e06a5b"/>
 <path d="M470 175 Q530 140 590 140 Q635 150 645 185 Q630 240 590 260 Q530 270 490 240 Q460 210 470 175Z" fill="#d2544a"/>
 <path d="M540 150 Q590 135 620 160 Q610 200 570 210 Q530 200 540 150Z" fill="#bf4540"/>
 <path d="M560 215 Q600 205 625 230 Q610 265 570 265 Q545 245 560 215Z" fill="#c94c44"/>
 <path d="M385 250 Q400 210 440 200 Q470 230 455 290 Q420 310 385 300Z" fill="#ec8072"/>
 <path d="M385 320 Q420 300 470 315 Q500 345 470 372 Q420 380 385 345Z" fill="#ee8a7b"/>
 <path d="M600 290 Q640 270 668 285 Q640 305 600 312Z" fill="#f29a8a"/>
 <path d="M648 175 Q675 160 670 190 Q655 215 640 220Z" fill="#e7786a"/>
 <path d="M480 250 Q520 260 540 300 Q500 320 470 300Z" fill="#e57264"/>
</g>
</svg></div>
<div class="t" style="left:6px;top:262.67px;font-size:6.5px;color:#eef6da;font-weight:normal;transform:scaleX(0.905);transform-origin:0 50%;">Our Services</div>
<div class="t" style="left:121.70000000000005px;top:261.71px;font-size:5.5px;color:#dfe9d4;font-weight:normal;font-family:'Liberation Serif',serif;transform:scaleX(1.010);transform-origin:0 50%;">From our studio, we create bespoke arrangements</div>
<div class="t" style="left:121.70000000000005px;top:269.16px;font-size:5.5px;color:#dfe9d4;font-weight:normal;font-family:'Liberation Serif',serif;transform:scaleX(1.013);transform-origin:0 50%;">and installations for individuals, events, and</div>
<div class="t" style="left:121.70000000000005px;top:276.61px;font-size:5.5px;color:#dfe9d4;font-weight:normal;font-family:'Liberation Serif',serif;transform:scaleX(1.007);transform-origin:0 50%;">communities, always guided by a respect for</div>
<div class="t" style="left:121.70000000000005px;top:284.06px;font-size:5.5px;color:#dfe9d4;font-weight:normal;font-family:'Liberation Serif',serif;transform:scaleX(0.995);transform-origin:0 50%;">nature and a love of design.</div>
<div class="t" style="left:6px;top:298.99px;font-size:17px;color:#eef6da;font-weight:normal;font-family:'Liberation Serif',serif;transform:scaleX(1.124);transform-origin:0 50%;">Events</div>
<div class="t" style="left:6px;top:316.99px;font-size:17px;color:#7fae8c;font-weight:normal;font-family:'Liberation Serif',serif;transform:scaleX(1.131);transform-origin:0 50%;">Weddings</div>
<div class="t" style="left:6px;top:334.89px;font-size:17px;color:#7fae8c;font-weight:normal;font-family:'Liberation Serif',serif;transform:scaleX(1.137);transform-origin:0 50%;">Parties</div>
<div class="a" style="left:199px;top:337px;width:35px;height:14px;background:#bdf285;border:2px solid #8a5cf0;box-sizing:border-box"></div>
<div class="t" style="left:203.5px;top:341.83px;font-size:4.5px;color:#1a3a20;font-weight:normal;transform:scaleX(1.086);transform-origin:0 50%;">Learn more</div>
<div class="a" style="left:6px;top:357px;width:112px;height:111px;overflow:hidden"><svg style="left:0;top:0" width="112" height="111" viewBox="0 0 100 100" preserveAspectRatio="none">
<defs><filter id="fb5" x="-5%" y="-5%" width="110%" height="110%"><feGaussianBlur stdDeviation=".9"/></filter>
<linearGradient id="fsk5" x1="0" y1="0" x2="1" y2="0"><stop offset="0" stop-color="#c89478"/><stop offset="1" stop-color="#b07a60"/></linearGradient></defs>
<rect width="100" height="100" fill="#5a2a1c"/>
<g filter="url(#fb5)">
<path d="M78 48H100V100H78Z" fill="#c08468"/>
<path d="M92 0H100V28H92Z" fill="#b47a60"/>
<path d="M0 0H6V100H0Z" fill="#62301f"/>
<path d="M6 0H95Q99 22 97 44Q93 52 86 54L80 56L79 100H19L17 62Q8 60 5 52Q3 28 6 0Z" fill="#0e0d0d"/>
<path d="M4 47Q14 50 24 54Q30 56 37 59Q42 64 40 70Q34 72 27 67Q16 62 4 56Z" fill="url(#fsk5)"/>
<path d="M63 25Q72 23 81 28Q88 33 87 37Q80 38 72 36Q65 32 63 25Z" fill="#a06a54"/>
<ellipse cx="52" cy="66" rx="18" ry="20" fill="#262d22"/>
<ellipse cx="40" cy="56" rx="6" ry="5" fill="#5a6e50"/><ellipse cx="48" cy="66" rx="7" ry="6" fill="#66785a"/>
<ellipse cx="60" cy="60" rx="7" ry="5" fill="#55684a"/><ellipse cx="56" cy="74" rx="6" ry="6" fill="#4e6044"/>
<ellipse cx="68" cy="68" rx="5" ry="6" fill="#627456"/><ellipse cx="44" cy="78" rx="4" ry="5" fill="#5a6c4e"/>
<ellipse cx="36" cy="66" rx="3" ry="6" fill="#6a7c5e"/><ellipse cx="72" cy="56" rx="4" ry="4" fill="#7a8a6a"/>
<circle cx="26" cy="37" r="3.3" fill="#7a5aaa"/><circle cx="22" cy="43" r="3.3" fill="#6c4e9e"/>
<circle cx="34" cy="34" r="3" fill="#8266b4"/><circle cx="43" cy="37" r="3.6" fill="#7558a8"/><circle cx="50" cy="35" r="3.2" fill="#6a4d9e"/>
<circle cx="59" cy="31" r="4.8" fill="#d42a1e"/><circle cx="65" cy="34" r="4.2" fill="#c42418"/>
<circle cx="57" cy="46" r="6.5" fill="#ece6d2"/><circle cx="64" cy="48" r="4" fill="#e2dac8"/>
<circle cx="87" cy="43" r="4.8" fill="#f0ece2"/><circle cx="81" cy="45" r="3.5" fill="#e6e0d6"/>
<circle cx="78" cy="53" r="3" fill="#ece6dc"/>
<circle cx="72" cy="47" r="2.8" fill="#6b4c9c"/><circle cx="70" cy="52" r="2.3" fill="#7a5aa8"/>
<path d="M42 84H62V97H42Z" fill="#1a1a1c"/>
<path d="M0 96H100V100H0Z" fill="#403d38"/>
</g>
</svg></div>
<div class="a" style="left:123px;top:357px;width:112px;height:111px;overflow:hidden"><svg style="left:0;top:0" width="112" height="111" viewBox="0 0 100 100" preserveAspectRatio="none">
<defs><filter id="tb6" x="-5%" y="-5%" width="110%" height="110%"><feGaussianBlur stdDeviation=".8"/></filter>
<linearGradient id="tg6" x1="0" x2="1" y1="0" y2=".4"><stop offset="0" stop-color="#e8e8e4"/><stop offset=".6" stop-color="#e4e4e0"/><stop offset="1" stop-color="#c4c4c0"/></linearGradient></defs>
<rect width="100" height="100" fill="#050505"/>
<g filter="url(#tb6)">
<path d="M0 54H34V82H0Z" fill="#1a201d"/>
<path d="M95 56H100V74H95Z" fill="#1a201d"/>
<path d="M0 79Q30 73 60 72Q95 71 100 73V100H0Z" fill="url(#tg6)"/>
<path d="M60 92Q82 86 100 88V100H66Z" fill="#b0b0ac" opacity=".7"/>
<path d="M0 86Q20 85 34 85L42 90L50 96L44 100H0Z" fill="#a68e76"/>
<path d="M10 58Q9 72 16 76Q23 72 22 58Z" fill="none" stroke="#9a9a98" stroke-width=".8" opacity=".6"/>
<path d="M22 56Q21 69 28 72Q35 69 34 56Z" fill="none" stroke="#9a9a98" stroke-width=".8" opacity=".5"/>
<path d="M10.5 70Q16 75 22 70L21 74Q16 77 11 74Z" fill="#e8e8e8"/>
<path d="M22.5 66Q28 71 33.5 66L33 70Q28 73 23 70Z" fill="#e0e0e0"/>
<rect x="15.5" y="76" width="1" height="16" fill="#c0c0c0"/><rect x="27.5" y="72" width="1" height="16" fill="#b0b0b0"/>
<path d="M43 58L41 88Q48 92 54 88L53 58Z" fill="#7a867a" opacity=".45"/>
<path d="M45 58L46 88M48.5 58L48.5 88M51 58L50.5 88" stroke="#4a6a3a" stroke-width="1" fill="none"/>
<path d="M18 22Q26 16 34 24M48 6Q54 3 62 1M30 12Q40 20 44 30M20 30Q28 26 34 32M62 1Q60 10 56 20" stroke="#4a3226" stroke-width="1.4" fill="none"/>
<ellipse cx="46" cy="54" rx="15" ry="7" fill="#2c4426"/>
<circle cx="24" cy="38" r="5.5" fill="#b06c5a"/><circle cx="30" cy="33" r="4" fill="#9a5e4e"/><circle cx="33" cy="43" r="4.5" fill="#b87866"/>
<circle cx="43" cy="42" r="9" fill="#ecbaa6"/><circle cx="51" cy="38" r="9.5" fill="#f2c8b4"/><circle cx="48" cy="40" r="5" fill="#f6d6c6"/>
<circle cx="61" cy="49" r="8.5" fill="#ececea"/><circle cx="68" cy="41" r="6.5" fill="#e4d2d2"/>
<circle cx="72" cy="32" r="4" fill="#d8dcd6"/><circle cx="58" cy="58" r="5.5" fill="#e8e8e6"/><circle cx="70" cy="51" r="4.5" fill="#f0f0ee"/>
<circle cx="56" cy="22" r="4" fill="#5a7ad0"/><circle cx="61" cy="15" r="3.8" fill="#7090e0"/><circle cx="59" cy="28" r="3" fill="#6a88d8"/>
</g>
</svg></div>
<div class="t" style="left:5.5px;top:474.06px;font-size:6px;color:#eef6da;font-weight:normal;font-family:'Liberation Serif',serif;transform:scaleX(1.045);transform-origin:0 50%;">Floral Installations</div>
<div class="t" style="left:5.5px;top:482.09px;font-size:5.2px;color:#dfe9d4;font-weight:normal;transform:scaleX(1.004);transform-origin:0 50%;">Large-scale botanical art for events, retail,</div>
<div class="t" style="left:5.5px;top:488.19px;font-size:5.2px;color:#dfe9d4;font-weight:normal;transform:scaleX(0.993);transform-origin:0 50%;">editorial, or immersive spatial experiences.</div>
<div class="t" style="left:122.29999999999995px;top:471.86px;font-size:6px;color:#eef6da;font-weight:normal;font-family:'Liberation Serif',serif;transform:scaleX(1.028);transform-origin:0 50%;">Custom Floral Concepts</div>
<div class="t" style="left:122.29999999999995px;top:480.19px;font-size:5.2px;color:#dfe9d4;font-weight:normal;transform:scaleX(0.988);transform-origin:0 50%;">Bespoke floral designs tailored to your space,</div>
<div class="t" style="left:122.29999999999995px;top:486.69px;font-size:5.2px;color:#dfe9d4;font-weight:normal;transform:scaleX(0.975);transform-origin:0 50%;">vision, and seasonal inspiration.</div>
<div class="a" style="left:6px;top:508px;width:228px;height:1px;background:#2a6c49;"></div>
<div class="t" style="left:44.299999999999955px;top:523.78px;font-size:10.5px;color:#eef6da;font-weight:normal;font-family:'Liberation Serif',serif;transform:scaleX(0.839);transform-origin:0 50%;">From our studio, we create bespoke</div>
<div class="t" style="left:44.299999999999955px;top:533.66px;font-size:10.5px;color:#eef6da;font-weight:normal;font-family:'Liberation Serif',serif;transform:scaleX(0.856);transform-origin:0 50%;">arrangements and installations for</div>
<div class="t" style="left:44.299999999999955px;top:543.54px;font-size:10.5px;color:#eef6da;font-weight:normal;font-family:'Liberation Serif',serif;transform:scaleX(0.843);transform-origin:0 50%;">individuals, events, and communities,</div>
<div class="t" style="left:44.299999999999955px;top:553.42px;font-size:10.5px;color:#eef6da;font-weight:normal;font-family:'Liberation Serif',serif;transform:scaleX(0.847);transform-origin:0 50%;">always guided by a respect for nature and</div>
<div class="t" style="left:44.299999999999955px;top:563.30px;font-size:10.5px;color:#eef6da;font-weight:normal;font-family:'Liberation Serif',serif;transform:scaleX(0.817);transform-origin:0 50%;">a love of design.</div>
</div>
<div class="frame" style="left:948px;top:109px;width:117px;height:600px">
<div class="t" style="left:6.2000000000000455px;top:6.95px;font-size:7px;color:#eef6da;font-weight:bold;font-family:'Liberation Serif',serif;transform:scaleX(1.162);transform-origin:0 50%;">Our Blooms®</div>
<div class="a" style="left:103px;top:7.599999999999994px;width:8px;height:0.8000000000000114px;background:#5f8f70;"></div>
<div class="a" style="left:103px;top:11.099999999999994px;width:8px;height:0.8000000000000114px;background:#5f8f70;"></div>
<div class="t" style="left:6.7999999999999545px;top:32.58px;font-size:18.6px;color:#eef6da;font-weight:normal;font-family:'Liberation Serif',serif;-webkit-text-stroke:.2px #eef6da;transform:scaleX(1.126);transform-origin:0 50%;">A new kind</div>
<div class="t" style="left:7.2000000000000455px;top:50.48px;font-size:18.6px;color:#eef6da;font-weight:normal;font-family:'Liberation Serif',serif;-webkit-text-stroke:.2px #eef6da;transform:scaleX(1.135);transform-origin:0 50%;">of bloom</div>
<div class="a" style="left:5px;top:33px;width:101px;height:37px;background:transparent;border:1.6px solid #2196e0"></div>
<div class="t" style="left:6px;top:79.37px;font-size:5px;color:#dfe9d4;font-weight:normal;font-family:'Liberation Serif',serif;transform:scaleX(1.006);transform-origin:0 50%;">Celebrate those you care for with the</div>
<div class="t" style="left:6px;top:85.27px;font-size:5px;color:#dfe9d4;font-weight:normal;font-family:'Liberation Serif',serif;transform:scaleX(1.000);transform-origin:0 50%;">artistry of our unique florals.</div>
<div class="a" style="left:6px;top:100px;width:105px;height:105px;overflow:hidden"><svg style="left:0;top:0" width="105" height="105" viewBox="183.5 0.0 633.0 633.0" preserveAspectRatio="none">
<defs>
<linearGradient id="pg7" x1="0" y1=".55" x2="1" y2=".25"><stop offset="0" stop-color="#f4e8d6"/><stop offset=".35" stop-color="#f2dccb"/><stop offset=".7" stop-color="#ecc6b6"/><stop offset="1" stop-color="#e4ad9c"/></linearGradient>
<radialGradient id="pr7" cx=".5" cy=".5" r=".5"><stop offset="0" stop-color="#c86a5c" stop-opacity=".95"/><stop offset=".5" stop-color="#cf7a6c" stop-opacity=".75"/><stop offset="1" stop-color="#e4a898" stop-opacity="0"/></radialGradient>
<filter id="ps7" x="-10%" y="-10%" width="120%" height="120%"><feGaussianBlur stdDeviation="2.2"/></filter>
</defs>
<rect x="0" y="0" width="1000" height="633" fill="url(#pg7)"/>
<ellipse cx="765" cy="385" rx="185" ry="150" fill="url(#pr7)" transform="rotate(-8 765 385)"/>
<g filter="url(#ps7)">
 <path d="M548 300 Q565 400 585 470 Q600 530 612 633 L624 633 Q612 530 598 465 Q580 400 562 300Z" fill="#3c7232"/>
 <path d="M520 633 Q480 560 445 455 Q500 500 545 590 L560 633Z" fill="#2a5224"/>
 <path d="M470 520 Q520 490 590 520 Q640 545 700 565 Q650 600 600 610 Q540 600 470 520Z" fill="#234a1f"/>
 <path d="M560 633 Q590 560 650 560 Q700 570 730 610 L700 633Z" fill="#47793a"/>
 <path d="M600 520 Q660 500 705 545 Q670 560 620 545Z" fill="#1f421b"/>
 <path d="M660 590 Q700 600 740 633 L660 633Z" fill="#3a6a30"/>
 <path d="M770 633 Q780 560 800 520 Q830 590 840 633Z" fill="#3f7034"/>
 <path d="M530 318 Q500 350 490 385 Q525 360 555 330Z" fill="#244c20"/>
 <path d="M520 300 Q560 285 600 305 Q580 325 540 322Z" fill="#2a5a24"/>
 <path d="M380 345 Q372 290 385 245 Q405 195 455 170 Q510 140 570 132 Q625 138 648 170 Q672 165 668 190 Q655 220 650 240 Q672 270 668 288 Q630 300 590 318 Q540 345 480 372 Q420 382 380 345Z" fill="#e06a5b"/>
 <path d="M470 175 Q530 140 590 140 Q635 150 645 185 Q630 240 590 260 Q530 270 490 240 Q460 210 470 175Z" fill="#d2544a"/>
 <path d="M540 150 Q590 135 620 160 Q610 200 570 210 Q530 200 540 150Z" fill="#bf4540"/>
 <path d="M560 215 Q600 205 625 230 Q610 265 570 265 Q545 245 560 215Z" fill="#c94c44"/>
 <path d="M385 250 Q400 210 440 200 Q470 230 455 290 Q420 310 385 300Z" fill="#ec8072"/>
 <path d="M385 320 Q420 300 470 315 Q500 345 470 372 Q420 380 385 345Z" fill="#ee8a7b"/>
 <path d="M600 290 Q640 270 668 285 Q640 305 600 312Z" fill="#f29a8a"/>
 <path d="M648 175 Q675 160 670 190 Q655 215 640 220Z" fill="#e7786a"/>
 <path d="M480 250 Q520 260 540 300 Q500 320 470 300Z" fill="#e57264"/>
</g>
</svg></div>
<div class="a" style="left:6px;top:212px;width:105px;height:1px;background:#2a6c49;"></div>
<div class="t" style="left:6px;top:221.37px;font-size:6.5px;color:#eef6da;font-weight:normal;transform:scaleX(0.958);transform-origin:0 50%;">Our Services</div>
<div class="t" style="left:6px;top:233.57px;font-size:5px;color:#dfe9d4;font-weight:normal;font-family:'Liberation Serif',serif;transform:scaleX(1.006);transform-origin:0 50%;">From our studio, we create bespoke arrangements</div>
<div class="t" style="left:6px;top:240.22px;font-size:5px;color:#dfe9d4;font-weight:normal;font-family:'Liberation Serif',serif;transform:scaleX(1.021);transform-origin:0 50%;">and installations for individuals, events, and</div>
<div class="t" style="left:6px;top:246.87px;font-size:5px;color:#dfe9d4;font-weight:normal;font-family:'Liberation Serif',serif;transform:scaleX(1.009);transform-origin:0 50%;">communities, always guided by a respect for nature</div>
<div class="t" style="left:6px;top:253.52px;font-size:5px;color:#dfe9d4;font-weight:normal;font-family:'Liberation Serif',serif;transform:scaleX(0.994);transform-origin:0 50%;">and a love of design.</div>
<div class="t" style="left:6px;top:284.92px;font-size:13px;color:#eef6da;font-weight:normal;font-family:'Liberation Serif',serif;transform:scaleX(1.167);transform-origin:0 50%;">Events</div>
<div class="t" style="left:52.39999999999998px;top:284.92px;font-size:13px;color:#7fae8c;font-weight:normal;font-family:'Liberation Serif',serif;transform:scaleX(1.161);transform-origin:0 50%;">Weddings</div>
<div class="a" style="left:6px;top:305px;width:35px;height:14px;background:#bdf285;border:2px solid #8a5cf0;box-sizing:border-box"></div>
<div class="t" style="left:10.5px;top:309.83px;font-size:4.5px;color:#1a3a20;font-weight:normal;transform:scaleX(1.086);transform-origin:0 50%;">Learn more</div>
<div class="a" style="left:6px;top:325px;width:105px;height:104px;overflow:hidden"><svg style="left:0;top:0" width="105" height="104" viewBox="0 0 100 100" preserveAspectRatio="none">
<defs><filter id="fb8" x="-5%" y="-5%" width="110%" height="110%"><feGaussianBlur stdDeviation=".9"/></filter>
<linearGradient id="fsk8" x1="0" y1="0" x2="1" y2="0"><stop offset="0" stop-color="#c89478"/><stop offset="1" stop-color="#b07a60"/></linearGradient></defs>
<rect width="100" height="100" fill="#5a2a1c"/>
<g filter="url(#fb8)">
<path d="M78 48H100V100H78Z" fill="#c08468"/>
<path d="M92 0H100V28H92Z" fill="#b47a60"/>
<path d="M0 0H6V100H0Z" fill="#62301f"/>
<path d="M6 0H95Q99 22 97 44Q93 52 86 54L80 56L79 100H19L17 62Q8 60 5 52Q3 28 6 0Z" fill="#0e0d0d"/>
<path d="M4 47Q14 50 24 54Q30 56 37 59Q42 64 40 70Q34 72 27 67Q16 62 4 56Z" fill="url(#fsk8)"/>
<path d="M63 25Q72 23 81 28Q88 33 87 37Q80 38 72 36Q65 32 63 25Z" fill="#a06a54"/>
<ellipse cx="52" cy="66" rx="18" ry="20" fill="#262d22"/>
<ellipse cx="40" cy="56" rx="6" ry="5" fill="#5a6e50"/><ellipse cx="48" cy="66" rx="7" ry="6" fill="#66785a"/>
<ellipse cx="60" cy="60" rx="7" ry="5" fill="#55684a"/><ellipse cx="56" cy="74" rx="6" ry="6" fill="#4e6044"/>
<ellipse cx="68" cy="68" rx="5" ry="6" fill="#627456"/><ellipse cx="44" cy="78" rx="4" ry="5" fill="#5a6c4e"/>
<ellipse cx="36" cy="66" rx="3" ry="6" fill="#6a7c5e"/><ellipse cx="72" cy="56" rx="4" ry="4" fill="#7a8a6a"/>
<circle cx="26" cy="37" r="3.3" fill="#7a5aaa"/><circle cx="22" cy="43" r="3.3" fill="#6c4e9e"/>
<circle cx="34" cy="34" r="3" fill="#8266b4"/><circle cx="43" cy="37" r="3.6" fill="#7558a8"/><circle cx="50" cy="35" r="3.2" fill="#6a4d9e"/>
<circle cx="59" cy="31" r="4.8" fill="#d42a1e"/><circle cx="65" cy="34" r="4.2" fill="#c42418"/>
<circle cx="57" cy="46" r="6.5" fill="#ece6d2"/><circle cx="64" cy="48" r="4" fill="#e2dac8"/>
<circle cx="87" cy="43" r="4.8" fill="#f0ece2"/><circle cx="81" cy="45" r="3.5" fill="#e6e0d6"/>
<circle cx="78" cy="53" r="3" fill="#ece6dc"/>
<circle cx="72" cy="47" r="2.8" fill="#6b4c9c"/><circle cx="70" cy="52" r="2.3" fill="#7a5aa8"/>
<path d="M42 84H62V97H42Z" fill="#1a1a1c"/>
<path d="M0 96H100V100H0Z" fill="#403d38"/>
</g>
</svg></div>
<div class="t" style="left:6px;top:435.51px;font-size:5.5px;color:#eef6da;font-weight:normal;font-family:'Liberation Serif',serif;transform:scaleX(1.135);transform-origin:0 50%;">Floral Installations</div>
<div class="t" style="left:6px;top:443.59px;font-size:5px;color:#dfe9d4;font-weight:normal;transform:scaleX(1.020);transform-origin:0 50%;">Large-scale botanical art for events, retail,</div>
<div class="t" style="left:6px;top:450.59px;font-size:5px;color:#dfe9d4;font-weight:normal;transform:scaleX(1.016);transform-origin:0 50%;">editorial, or immersive spatial experiences.</div>
<div class="a" style="left:6px;top:463px;width:105px;height:103px;overflow:hidden"><svg style="left:0;top:0" width="105" height="103" viewBox="0 0 100 100" preserveAspectRatio="none">
<defs><filter id="tb9" x="-5%" y="-5%" width="110%" height="110%"><feGaussianBlur stdDeviation=".8"/></filter>
<linearGradient id="tg9" x1="0" x2="1" y1="0" y2=".4"><stop offset="0" stop-color="#e8e8e4"/><stop offset=".6" stop-color="#e4e4e0"/><stop offset="1" stop-color="#c4c4c0"/></linearGradient></defs>
<rect width="100" height="100" fill="#050505"/>
<g filter="url(#tb9)">
<path d="M0 54H34V82H0Z" fill="#1a201d"/>
<path d="M95 56H100V74H95Z" fill="#1a201d"/>
<path d="M0 79Q30 73 60 72Q95 71 100 73V100H0Z" fill="url(#tg9)"/>
<path d="M60 92Q82 86 100 88V100H66Z" fill="#b0b0ac" opacity=".7"/>
<path d="M0 86Q20 85 34 85L42 90L50 96L44 100H0Z" fill="#a68e76"/>
<path d="M10 58Q9 72 16 76Q23 72 22 58Z" fill="none" stroke="#9a9a98" stroke-width=".8" opacity=".6"/>
<path d="M22 56Q21 69 28 72Q35 69 34 56Z" fill="none" stroke="#9a9a98" stroke-width=".8" opacity=".5"/>
<path d="M10.5 70Q16 75 22 70L21 74Q16 77 11 74Z" fill="#e8e8e8"/>
<path d="M22.5 66Q28 71 33.5 66L33 70Q28 73 23 70Z" fill="#e0e0e0"/>
<rect x="15.5" y="76" width="1" height="16" fill="#c0c0c0"/><rect x="27.5" y="72" width="1" height="16" fill="#b0b0b0"/>
<path d="M43 58L41 88Q48 92 54 88L53 58Z" fill="#7a867a" opacity=".45"/>
<path d="M45 58L46 88M48.5 58L48.5 88M51 58L50.5 88" stroke="#4a6a3a" stroke-width="1" fill="none"/>
<path d="M18 22Q26 16 34 24M48 6Q54 3 62 1M30 12Q40 20 44 30M20 30Q28 26 34 32M62 1Q60 10 56 20" stroke="#4a3226" stroke-width="1.4" fill="none"/>
<ellipse cx="46" cy="54" rx="15" ry="7" fill="#2c4426"/>
<circle cx="24" cy="38" r="5.5" fill="#b06c5a"/><circle cx="30" cy="33" r="4" fill="#9a5e4e"/><circle cx="33" cy="43" r="4.5" fill="#b87866"/>
<circle cx="43" cy="42" r="9" fill="#ecbaa6"/><circle cx="51" cy="38" r="9.5" fill="#f2c8b4"/><circle cx="48" cy="40" r="5" fill="#f6d6c6"/>
<circle cx="61" cy="49" r="8.5" fill="#ececea"/><circle cx="68" cy="41" r="6.5" fill="#e4d2d2"/>
<circle cx="72" cy="32" r="4" fill="#d8dcd6"/><circle cx="58" cy="58" r="5.5" fill="#e8e8e6"/><circle cx="70" cy="51" r="4.5" fill="#f0f0ee"/>
<circle cx="56" cy="22" r="4" fill="#5a7ad0"/><circle cx="61" cy="15" r="3.8" fill="#7090e0"/><circle cx="59" cy="28" r="3" fill="#6a88d8"/>
</g>
</svg></div>
<div class="t" style="left:6px;top:571.01px;font-size:5.5px;color:#eef6da;font-weight:normal;font-family:'Liberation Serif',serif;transform:scaleX(1.122);transform-origin:0 50%;">Custom Floral Concepts</div>
<div class="t" style="left:6px;top:578.59px;font-size:5px;color:#dfe9d4;font-weight:normal;transform:scaleX(1.062);transform-origin:0 50%;">Bespoke floral designs tailored to your</div>
</div>
<svg style="left:365.5px;top:248.5px" width="18" height="18" viewBox="0 0 17 17"><path d="M1.8 1.8L15.6 6.8L9.2 9.2L6.8 15.6Z" fill="#1878d8" stroke="#fff" stroke-width="1.4" stroke-linejoin="round"/></svg>
<div class="a" style="left:384px;top:266px;width:45px;height:21px;background:#1a7ee0;border-radius:3px"></div>
<div class="t" style="left:384px;top:270.48px;font-size:12.5px;color:#ffffff;font-weight:normal;width:45px;text-align:center;-webkit-text-stroke:.35px #fff;">Robin</div>
<svg style="left:322px;top:569px" width="18" height="18" viewBox="0 0 17 17"><path d="M1.8 1.8L15.6 6.8L9.2 9.2L6.8 15.6Z" fill="#6f7aa6" stroke="#fff" stroke-width="1.4" stroke-linejoin="round"/></svg>
<div class="a" style="left:340px;top:590px;width:44px;height:21px;background:#6a77a0;border-radius:3px"></div>
<div class="t" style="left:340px;top:594.48px;font-size:12.5px;color:#ffffff;font-weight:normal;width:44px;text-align:center;-webkit-text-stroke:.35px #fff;">Maria</div>
<svg style="left:681px;top:541px" width="18" height="18" viewBox="0 0 17 17"><path d="M1.8 1.8L15.6 6.8L9.2 9.2L6.8 15.6Z" fill="#ee4a2a" stroke="#fff" stroke-width="1.4" stroke-linejoin="round"/></svg>
<div class="a" style="left:699px;top:563px;width:50px;height:20px;background:#e8492a;border-radius:3px"></div>
<div class="t" style="left:699px;top:566.98px;font-size:12.5px;color:#ffffff;font-weight:normal;width:50px;text-align:center;-webkit-text-stroke:.35px #fff;">Amina</div>
<div class="a" style="left:473px;top:636px;width:373px;height:40px;background:#2c2c2c;border-radius:10px;box-shadow:0 2px 6px rgba(0,0,0,.35)"></div>
<div class="a" style="left:480px;top:643px;width:26px;height:26px;background:#3d3df2;border-radius:5px"></div>
<svg style="left:485px;top:648px" width="16" height="16" viewBox="0 0 16 16" fill="none" stroke="#fff" stroke-width="1.3" stroke-linejoin="round" stroke-linecap="round"><path d="M2 2L14 6.5L8.5 8.5L6.5 14Z"/></svg>
<svg style="left:510px;top:654px" width="6" height="4" viewBox="0 0 6 4" fill="none" stroke="#ccc" stroke-width="1.1"><path d="M.6 .6L3 3L5.4 .6"/></svg>
<svg style="left:532px;top:648px" width="15" height="15" viewBox="0 0 15 15" fill="none" stroke="#e0e0e0" stroke-width="1.2" stroke-linejoin="round" stroke-linecap="round"><path d="M4.5 .5V14.5M10.5 .5V14.5M.5 4.5H14.5M.5 10.5H14.5"/></svg>
<svg style="left:557px;top:654px" width="6" height="4" viewBox="0 0 6 4" fill="none" stroke="#ccc" stroke-width="1.1"><path d="M.6 .6L3 3L5.4 .6"/></svg>
<svg style="left:578px;top:647px" width="17" height="17" viewBox="0 0 17 17" fill="none" stroke="#e0e0e0" stroke-width="1.1" stroke-linejoin="round" stroke-linecap="round"><path d="M8.5 8.5C6 6.6 6.3 2.3 9 .9C11.6 2 11.1 6.3 8.5 8.5Z" transform="rotate(0 8.5 8.5)"/><path d="M8.5 8.5C6 6.6 6.3 2.3 9 .9C11.6 2 11.1 6.3 8.5 8.5Z" transform="rotate(90 8.5 8.5)"/><path d="M8.5 8.5C6 6.6 6.3 2.3 9 .9C11.6 2 11.1 6.3 8.5 8.5Z" transform="rotate(180 8.5 8.5)"/><path d="M8.5 8.5C6 6.6 6.3 2.3 9 .9C11.6 2 11.1 6.3 8.5 8.5Z" transform="rotate(270 8.5 8.5)"/></svg>
<svg style="left:604px;top:654px" width="6" height="4" viewBox="0 0 6 4" fill="none" stroke="#ccc" stroke-width="1.1"><path d="M.6 .6L3 3L5.4 .6"/></svg>
<svg style="left:626px;top:648px" width="16" height="16" viewBox="0 0 16 16" fill="none" stroke="#e0e0e0" stroke-width="1.2" stroke-linejoin="round" stroke-linecap="round"><rect x=".8" y=".8" width="14.4" height="14.4" rx="2.5"/></svg>
<svg style="left:651px;top:654px" width="6" height="4" viewBox="0 0 6 4" fill="none" stroke="#ccc" stroke-width="1.1"><path d="M.6 .6L3 3L5.4 .6"/></svg>
<svg style="left:672px;top:647px" width="17" height="17" viewBox="0 0 17 17" fill="none" stroke="#e0e0e0" stroke-width="1.1" stroke-linejoin="round" stroke-linecap="round"><path d="M1.8 1.8Q8 2 11.5 5Q15.5 8.5 15.2 11L11 15.2Q8.5 15.5 5 11.5Q2 8 1.8 1.8Z"/><circle cx="8.3" cy="8.3" r="1.7"/><path d="M1.8 1.8L7 7"/></svg>
<svg style="left:698px;top:654px" width="6" height="4" viewBox="0 0 6 4" fill="none" stroke="#ccc" stroke-width="1.1"><path d="M.6 .6L3 3L5.4 .6"/></svg>
<svg style="left:720px;top:648px" width="16" height="16" viewBox="0 0 16 16" fill="none" stroke="#e0e0e0" stroke-width="1.1" stroke-linejoin="round" stroke-linecap="round"><rect x=".8" y=".8" width="14.4" height="14.4" rx="1.5"/><circle cx="10.5" cy="5" r="1.5"/><path d="M.8 12L5.5 7L12 14"/></svg>
<svg style="left:753px;top:648px" width="16" height="16" viewBox="0 0 16 16" fill="none" stroke="#e0e0e0" stroke-width="1.2" stroke-linejoin="round" stroke-linecap="round"><path d="M1 3.5V1H15V3.5M8 1V15M5.5 15H10.5"/></svg>
<svg style="left:786px;top:648px" width="16" height="16" viewBox="0 0 16 16" fill="none" stroke="#e0e0e0" stroke-width="1.1" stroke-linejoin="round" stroke-linecap="round"><path d="M3 14.5Q1 10.5 1.5 7.5A6.5 6.5 0 1 1 8.5 15Q5.5 15 3 14.5Z"/></svg>
<svg style="left:818px;top:647px" width="17" height="17" viewBox="0 0 17 17" fill="none" stroke="#e0e0e0" stroke-width="1.1" stroke-linejoin="round" stroke-linecap="round"><path d="M7 3C7.6 7.4 8.6 8.9 13 9.5C8.6 10.1 7.6 11.6 7 16C6.4 11.6 5.4 10.1 1 9.5C5.4 8.9 6.4 7.4 7 3Z"/><circle cx="13.3" cy="2.8" r="1.6"/><path d="M13.5 12.3V16.3M11.5 14.3H15.5"/></svg>

<!-- ============ RIGHT PANEL ============ -->
<div id="rp" class="a"></div>
<div class="a" style="left:1132px;top:10px;width:20px;height:20px;border-radius:50%;background:radial-gradient(ellipse 40% 45% at 58% 50%,#2a1e1a 0 55%,transparent 90%),radial-gradient(circle at 40% 40%,#c89888,#a87868 60%,#8a7a78)"></div>
<div class="a" style="left:1151px;top:10px;width:20px;height:20px;border-radius:50%;background:radial-gradient(ellipse 22% 30% at 50% 52%,#c89a88 0 60%,transparent 100%),radial-gradient(circle at 50% 60%,#1e1614 0 50%,#d0d0d0 72%,#b8b8b8)"></div>
<div class="a" style="left:1170px;top:10px;width:18px;height:20px;border-radius:50%;background:radial-gradient(ellipse 45% 40% at 60% 65%,#d8d0cc 0 40%,transparent 80%),radial-gradient(circle at 55% 40%,#d8a898 0 40%,#a87868 70%,#6a6a88)"></div>
<svg style="left:1191px;top:18px" width="6" height="4" viewBox="0 0 6 4" fill="none" stroke="#bbb" stroke-width="1.1"><path d="M.6 .6L3 3L5.4 .6"/></svg><svg style="left:1232px;top:14px" width="12" height="13" viewBox="0 0 12 13" fill="none" stroke="#e0e0e0" stroke-width="1.2"><path d="M1 1.2L11 6.5L1 11.8Z" stroke-linejoin="round"/></svg>
<svg style="left:1252px;top:18px" width="6" height="4" viewBox="0 0 6 4" fill="none" stroke="#bbb" stroke-width="1.1"><path d="M.6 .6L3 3L5.4 .6"/></svg><div class="a" style="left:1268px;top:7px;width:45px;height:26px;background:#3d3df2;border-radius:5px;"></div>
<div class="t" style="left:1268px;top:15.4px;font-size:10px;color:#ffffff;font-weight:normal;width:45px;text-align:center">Share</div>
<div class="a" style="left:1129px;top:40px;width:43px;height:19px;background:#383838;border-radius:5px;"></div>
<div class="t" style="left:1135px;top:44.7px;font-size:10px;color:#f2f2f2;font-weight:normal;-webkit-text-stroke:.3px currentColor;;transform:scaleX(0.963);transform-origin:0 50%;">Design</div>
<div class="t" style="left:1182px;top:44.7px;font-size:10px;color:#b4b4b4;font-weight:normal;">Interaction</div>
<div class="t" style="left:1274px;top:44.7px;font-size:10px;color:#e6e6e6;font-weight:normal;">100%</div>
<svg style="left:1303px;top:47.5px" width="6" height="4" viewBox="0 0 6 4" fill="none" stroke="#bbb" stroke-width="1.1"><path d="M.6 .6L3 3L5.4 .6"/></svg><div class="hl" style="left:1123px;top:66px;width:197px"></div>
<div class="t" style="left:1135px;top:81.0px;font-size:11px;color:#f0f0f0;font-weight:normal;-webkit-text-stroke:.3px currentColor;;transform:scaleX(0.991);transform-origin:0 50%;">Frame</div>
<svg style="left:1174px;top:84.5px" width="6" height="4" viewBox="0 0 6 4" fill="none" stroke="#bbb" stroke-width="1.1"><path d="M.6 .6L3 3L5.4 .6"/></svg><svg style="left:1243px;top:81px" width="16" height="11" viewBox="0 0 16 11" fill="none" stroke="#ddd" stroke-width="1.1"><path d="M4.5 1.5L.8 5.5L4.5 9.5M11.5 1.5L15.2 5.5L11.5 9.5M9.5 .8L6.5 10.2"/></svg>
<svg style="left:1271px;top:80px" width="12" height="12" viewBox="0 0 12 12" fill="none" stroke="#ddd" stroke-width="1"><path d="M6 .7L8 2.7L6 4.7L4 2.7ZM6 7.3L8 9.3L6 11.3L4 9.3ZM2.7 4L4.7 6L2.7 8L.7 6ZM9.3 4L11.3 6L9.3 8L7.3 6Z"/></svg>
<div class="t" style="left:1296px;top:79px;font-size:13px;color:#e6e6e6;letter-spacing:0px;font-weight:bold">&middot;&middot;&middot;</div>
<div class="hl" style="left:1123px;top:105px;width:197px"></div>
<div class="t" style="left:1135px;top:117.2px;font-size:10px;color:#cfcfcf;font-weight:normal;">Link</div>
<svg style="left:1298px;top:116px" width="12" height="12" viewBox="0 0 12 12" fill="none" stroke="#cfcfcf" stroke-width="1.1"><path d="M6 0V12M0 6H12"/></svg>
<div class="hl" style="left:1123px;top:139px;width:197px"></div>
<div class="t" style="left:1135px;top:150.2px;font-size:10px;color:#eeeeee;font-weight:normal;-webkit-text-stroke:.3px currentColor;;transform:scaleX(0.992);transform-origin:0 50%;">Position</div>
<div class="t" style="left:1249px;top:150.2px;font-size:10px;color:#e6e6e6;font-weight:normal;">Absolute</div>
<svg style="left:1300px;top:153px" width="6" height="4" viewBox="0 0 6 4" fill="none" stroke="#bbb" stroke-width="1.1"><path d="M.6 .6L3 3L5.4 .6"/></svg><div class="a" style="left:1135px;top:175px;width:72px;height:20px;background:#383838;border-radius:5px;"></div>
<div class="a" style="left:1214px;top:175px;width:73px;height:20px;background:#383838;border-radius:5px;"></div>
<div class="a" style="left:1159px;top:175px;width:1px;height:20px;background:#2c2c2c"></div>
<div class="a" style="left:1183px;top:175px;width:1px;height:20px;background:#2c2c2c"></div>
<div class="a" style="left:1238px;top:175px;width:1px;height:20px;background:#2c2c2c"></div>
<div class="a" style="left:1262px;top:175px;width:1px;height:20px;background:#2c2c2c"></div>
<svg style="left:1141px;top:179px" width="12" height="12" viewBox="0 0 12 12" fill="none" stroke="#ddd" stroke-width="1.1"><path d="M.8 .5V11.5M3 3H10M3 6H7.5M3 9H10"/></svg>
<svg style="left:1165px;top:179px" width="12" height="12" viewBox="0 0 12 12" fill="none" stroke="#ddd" stroke-width="1.1"><path d="M6 .5V11.5M2 3.5H10M3 8.5H9"/></svg>
<svg style="left:1190px;top:179px" width="12" height="12" viewBox="0 0 12 12" fill="none" stroke="#ddd" stroke-width="1.1"><path d="M11.2 .5V11.5M2 3H9M4.5 6H9M2 9H9"/></svg>
<svg style="left:1220px;top:179px" width="12" height="12" viewBox="0 0 12 12" fill="none" stroke="#ddd" stroke-width="1.1"><path d="M.5 .8H11.5M3 3V11M6.5 3V7"/></svg>
<svg style="left:1244px;top:179px" width="12" height="12" viewBox="0 0 12 12" fill="none" stroke="#ddd" stroke-width="1.1"><path d="M.5 6H11.5M3.5 2V10M7.5 3V9"/></svg>
<svg style="left:1268px;top:179px" width="12" height="12" viewBox="0 0 12 12" fill="none" stroke="#ddd" stroke-width="1.1"><path d="M.5 11.2H11.5M3 1V9M6.5 5V9"/></svg>
<div class="t" style="left:1296px;top:177px;font-size:13px;color:#e6e6e6;font-weight:bold">&middot;&middot;&middot;</div>
<div class="a" style="left:1293px;top:201px;width:20px;height:20px;background:#545180;border-radius:5px;"></div>
<svg style="left:1297px;top:205px" width="12" height="12" viewBox="0 0 12 12" fill="none" stroke="#c9b8ff" stroke-width="1"><rect x=".8" y="1.5" width="10.4" height="9" rx="1"/><path d="M3.5 .5H8.5M3.5 11.5H8.5M6 4V8M4 6H8"/></svg>
<div class="a" style="left:1135px;top:201px;width:152px;height:108px;border:1px solid #454545;border-radius:5px"></div>
<div class="a" style="left:1188px;top:208px;width:46px;height:20px;background:#383838;border-radius:5px;"></div>
<div class="t" style="left:1188px;top:213.2px;font-size:10px;color:#e6e6e6;font-weight:normal;width:46px;text-align:center">216</div>
<div class="a" style="left:1142px;top:245px;width:40px;height:20px;background:#383838;border-radius:5px;"></div>
<div class="t" style="left:1142px;top:250.2px;font-size:10px;color:#e6e6e6;font-weight:normal;width:40px;text-align:center">1200</div>
<div class="a" style="left:1188px;top:234px;width:46px;height:43px;background:#383838;border-radius:5px;"></div>
<div class="a" style="left:1205px;top:241px;width:11px;height:1.5px;background:#a99cf5"></div>
<div class="a" style="left:1205px;top:270px;width:11px;height:1px;background:#777"></div>
<div class="a" style="left:1195px;top:250px;width:1.5px;height:11px;background:#a99cf5"></div>
<div class="a" style="left:1226px;top:250px;width:1px;height:11px;background:#888"></div>
<svg style="left:1205px;top:250px" width="12" height="12" viewBox="0 0 12 12" fill="none" stroke="#999" stroke-width="1.1"><path d="M6 0V12M0 6H12"/></svg>
<div class="a" style="left:1241px;top:245px;width:39px;height:20px;border:1px solid #454545;border-radius:5px"></div>
<div class="t" style="left:1241px;top:250.2px;font-size:10px;color:#777;font-weight:normal;width:39px;text-align:center">0</div>
<div class="a" style="left:1188px;top:284px;width:46px;height:20px;border:1px solid #454545;border-radius:5px"></div>
<div class="t" style="left:1188px;top:289.2px;font-size:10px;color:#777;font-weight:normal;width:46px;text-align:center">0</div>
<div class="a" style="left:1135px;top:317px;width:72px;height:20px;border:1px solid #454545;border-radius:5px"></div>
<svg style="left:1140px;top:322px" width="12" height="10" viewBox="0 0 12 10" fill="none" stroke="#ddd" stroke-width="1"><path d="M.6 1V9M11.4 1V9M.6 5H11.4"/></svg>
<div class="t" style="left:1155px;top:322.2px;font-size:10px;color:#e6e6e6;font-weight:normal;">Left</div>
<svg style="left:1195px;top:325px" width="6" height="4" viewBox="0 0 6 4" fill="none" stroke="#bbb" stroke-width="1.1"><path d="M.6 .6L3 3L5.4 .6"/></svg><div class="a" style="left:1214px;top:317px;width:73px;height:20px;border:1px solid #454545;border-radius:5px"></div>
<svg style="left:1220px;top:322px" width="8" height="10" viewBox="0 0 8 10" fill="none" stroke="#ddd" stroke-width="1"><path d="M1 .5H7M1 9.5H7M4 .5V9.5"/></svg>
<div class="t" style="left:1234px;top:322.2px;font-size:10px;color:#e6e6e6;font-weight:normal;">Top</div>
<svg style="left:1275px;top:325px" width="6" height="4" viewBox="0 0 6 4" fill="none" stroke="#bbb" stroke-width="1.1"><path d="M.6 .6L3 3L5.4 .6"/></svg><div class="a" style="left:1135px;top:343px;width:72px;height:20px;background:#383838;border-radius:5px;"></div>
<svg style="left:1141px;top:349px" width="9" height="9" viewBox="0 0 9 9" fill="none" stroke="#ddd" stroke-width="1"><path d="M1 .5V8.5H8.5M1 4Q4.5 4 4.5 8.5"/></svg>
<div class="t" style="left:1155px;top:348.2px;font-size:10px;color:#e6e6e6;font-weight:normal;">0</div>
<div class="a" style="left:1214px;top:343px;width:73px;height:20px;background:#383838;border-radius:5px;"></div>
<div class="a" style="left:1238px;top:343px;width:1px;height:20px;background:#2c2c2c"></div>
<div class="a" style="left:1262px;top:343px;width:1px;height:20px;background:#2c2c2c"></div>
<svg style="left:1220px;top:347px" width="12" height="12" viewBox="0 0 12 12" fill="none" stroke="#ddd" stroke-width="1"><path d="M3 1L9 5L3 8.5M9 1L3 5L9 8.5M3 11.5H9"/></svg>
<svg style="left:1244px;top:348px" width="12" height="10" viewBox="0 0 12 10" fill="none" stroke="#ddd" stroke-width="1"><path d="M6 0V10M1 1.5V8.5L4 5ZM11 1.5V8.5L8 5Z"/></svg>
<svg style="left:1268px;top:347px" width="12" height="12" viewBox="0 0 12 12" fill="none" stroke="#ddd" stroke-width="1"><path d="M0 6H12M1.5 1H10.5L6 4ZM1.5 11H10.5L6 8Z"/></svg>
<div class="hl" style="left:1123px;top:376px;width:197px"></div>
<div class="t" style="left:1135px;top:387.8px;font-size:10px;color:#eeeeee;font-weight:normal;-webkit-text-stroke:.3px currentColor;;transform:scaleX(0.997);transform-origin:0 50%;">Auto layout</div>
<svg style="left:1271px;top:387px" width="12" height="12" viewBox="0 0 12 12" fill="none" stroke="#ddd" stroke-width="1"><path d="M1 1L4 4M4 1.5V4H1.5M11 1L8 4M8 1.5V4H10.5M1 11L4 8M1.5 8H4V10.5M11 11L8 8M10.5 8H8V10.5"/></svg>
<div class="a" style="left:1294px;top:383px;width:19px;height:19px;background:#545180;border-radius:5px;"></div>
<svg style="left:1298px;top:387px" width="12" height="12" viewBox="0 0 12 12" fill="none" stroke="#c9b8ff" stroke-width="1"><rect x=".5" y=".8" width="4.5" height="10.4" rx="1"/><path d="M7 5.5A2 2 0 1 1 11 5.5L7 5.5Z M7 8.5L8.5 10L11 7.5"/></svg>
<div class="a" style="left:1135px;top:412px;width:73px;height:20px;background:#383838;border-radius:5px;"></div>
<div class="a" style="left:1160px;top:412px;width:23px;height:20px;background:#2c2c2c;border-radius:5px;border:1px solid #3f3f3f"></div>
<svg style="left:1143px;top:417px" width="8" height="10" viewBox="0 0 8 10" fill="none" stroke="#ddd" stroke-width="1.1"><path d="M4 .5V9.5M1 6.5L4 9.5L7 6.5"/></svg>
<svg style="left:1166px;top:418px" width="11" height="8" viewBox="0 0 11 8" fill="none" stroke="#ddd" stroke-width="1.1"><path d="M.5 4H10.5M7.5 1L10.5 4L7.5 7"/></svg>
<svg style="left:1190px;top:417px" width="11" height="10" viewBox="0 0 11 10" fill="none" stroke="#999" stroke-width="1"><path d="M4 9L1 6L4 3M1 6H8Q10.5 6 10.5 3.5T8 1"/></svg>
<div class="a" style="left:1214px;top:412px;width:73px;height:47px;background:#383838;border-radius:5px;"></div>
<div class="a" style="left:1220px;top:418px;width:1.5px;height:8px;background:#a99cf5"></div><div class="a" style="left:1223.5px;top:418px;width:1.5px;height:11px;background:#a99cf5"></div><div class="a" style="left:1227px;top:418px;width:1.5px;height:6px;background:#a99cf5"></div>
<div class="a" style="left:1250.5px;top:422px;width:1px;height:1px;background:#888"></div>
<div class="a" style="left:1277px;top:422px;width:1px;height:1px;background:#888"></div>
<div class="a" style="left:1224px;top:435.5px;width:1px;height:1px;background:#888"></div>
<div class="a" style="left:1250.5px;top:435.5px;width:1px;height:1px;background:#888"></div>
<div class="a" style="left:1277px;top:435.5px;width:1px;height:1px;background:#888"></div>
<div class="a" style="left:1224px;top:449px;width:1px;height:1px;background:#888"></div>
<div class="a" style="left:1250.5px;top:449px;width:1px;height:1px;background:#888"></div>
<div class="a" style="left:1277px;top:449px;width:1px;height:1px;background:#888"></div>
<svg style="left:1298px;top:415px" width="12" height="14" viewBox="0 0 12 14" fill="none" stroke="#ddd" stroke-width="1.1"><path d="M3.5 0V14M8.5 0V14"/><circle cx="3.5" cy="9.5" r="1.8" fill="#2c2c2c"/><circle cx="8.5" cy="4.5" r="1.8" fill="#2c2c2c"/></svg>
<div class="a" style="left:1135px;top:439px;width:73px;height:20px;background:#383838;border-radius:5px;"></div>
<div class="a" style="left:1187px;top:439px;width:1px;height:20px;background:#2c2c2c"></div>
<svg style="left:1141px;top:444px" width="9" height="10" viewBox="0 0 9 10" fill="none" stroke="#ddd" stroke-width="1"><path d="M.5 .5Q2 5 .5 9.5M8.5 .5Q7 5 8.5 9.5M4.5 2V8"/></svg>
<div class="t" style="left:1155px;top:444.2px;font-size:10px;color:#e6e6e6;font-weight:normal;">16</div>
<svg style="left:1195px;top:447px" width="6" height="4" viewBox="0 0 6 4" fill="none" stroke="#bbb" stroke-width="1.1"><path d="M.6 .6L3 3L5.4 .6"/></svg><div class="a" style="left:1135px;top:465px;width:73px;height:20px;background:#383838;border-radius:5px;"></div>
<div class="t" style="left:1142px;top:470.2px;font-size:10px;color:#999;font-weight:normal;">X</div>
<div class="t" style="left:1155px;top:470.2px;font-size:10px;color:#e6e6e6;font-weight:normal;">612</div>
<div class="a" style="left:1214px;top:465px;width:73px;height:20px;background:#383838;border-radius:5px;"></div>
<svg style="left:1220px;top:470px" width="10" height="10" viewBox="0 0 10 10" fill="none" stroke="#ddd" stroke-width="1"><path d="M.5 .5H9.5M.5 9.5H9.5"/><rect x="3" y="3" width="4" height="4"/></svg>
<div class="t" style="left:1235px;top:470.2px;font-size:10px;color:#e6e6e6;font-weight:normal;">109</div>
<svg style="left:1298px;top:469px" width="12" height="12" viewBox="0 0 12 12" fill="none" stroke="#ddd" stroke-width="1.1"><path d="M2 4V2.5Q2 1.5 3 1.5H9Q10 1.5 10 2.5V4M2 8V9.5Q2 10.5 3 10.5H9Q10 10.5 10 9.5V8M1 6H2M10 6H11"/></svg>
<div class="a" style="left:1136px;top:496px;width:12px;height:12px;background:#383838;border-radius:3px;"></div>
<svg style="left:1138px;top:498px" width="8" height="8" viewBox="0 0 8 8" fill="none" stroke="#ddd" stroke-width="1.1"><path d="M1 4.2L3 6.2L7 1.8"/></svg>
<div class="t" style="left:1155px;top:497.2px;font-size:10px;color:#e6e6e6;font-weight:normal;">Clip content</div>
<div class="hl" style="left:1123px;top:521px;width:197px"></div>
<div class="t" style="left:1135px;top:533.2px;font-size:10px;color:#eeeeee;font-weight:normal;-webkit-text-stroke:.3px currentColor;;transform:scaleX(0.977);transform-origin:0 50%;">Appearance</div>
<svg style="left:1274px;top:533px" width="12" height="9" viewBox="0 0 12 9" fill="none" stroke="#ddd" stroke-width="1.1"><path d="M.6 4.5Q6 -1.5 11.4 4.5Q6 10.5 .6 4.5Z"/><circle cx="6" cy="4.5" r="1.6"/></svg>
<svg style="left:1298px;top:531px" width="10" height="12" viewBox="0 0 10 12" fill="none" stroke="#ddd" stroke-width="1.1"><path d="M5 .8Q9.2 5.5 9.2 8A4.2 4.2 0 0 1 .8 8Q.8 5.5 5 .8Z"/></svg>
<div class="a" style="left:1135px;top:558px;width:73px;height:20px;background:#383838;border-radius:5px;"></div>
<svg style="left:1140px;top:562px" width="11" height="11" viewBox="0 0 11 11" fill="none" stroke="#ddd" stroke-width="1"><rect x=".5" y=".5" width="10" height="10" rx="1.5"/><path d="M7 3V3.5M7 5.5V6M7 8V8.5M5 7V7.5M3 8.5V9" stroke="#999"/></svg>
<div class="t" style="left:1155px;top:563.2px;font-size:10px;color:#e6e6e6;font-weight:normal;">100%</div>
<div class="a" style="left:1214px;top:558px;width:73px;height:20px;background:#383838;border-radius:5px;"></div>
<svg style="left:1221px;top:563px" width="9" height="9" viewBox="0 0 9 9" fill="none" stroke="#ddd" stroke-width="1.1"><path d="M.8 8.5V4Q.8 .8 4 .8H8.5"/></svg>
<div class="t" style="left:1235px;top:563.2px;font-size:10px;color:#e6e6e6;font-weight:normal;">0</div>
<svg style="left:1298px;top:561px" width="11" height="11" viewBox="0 0 11 11" fill="none" stroke="#ddd" stroke-width="1.1"><path d="M.5 3.5V1.5Q.5 .5 1.5 .5H3.5M7.5 .5H9.5Q10.5 .5 10.5 1.5V3.5M10.5 7.5V9.5Q10.5 10.5 9.5 10.5H7.5M3.5 10.5H1.5Q.5 10.5 .5 9.5V7.5"/></svg>
<div class="hl" style="left:1123px;top:592px;width:197px"></div>
<div class="t" style="left:1135px;top:602.7px;font-size:10px;color:#eeeeee;font-weight:normal;-webkit-text-stroke:.3px currentColor;;transform:scaleX(0.900);transform-origin:0 50%;">Fill</div>
<svg style="left:1275px;top:601px" width="11" height="11" viewBox="0 0 11 11" fill="none" stroke="#ddd" stroke-width="1"><circle cx="2.5" cy="2.5" r="1.9"/><circle cx="8.5" cy="2.5" r="1.9"/><circle cx="2.5" cy="8.5" r="1.9"/><circle cx="8.5" cy="8.5" r="1.9"/></svg>
<svg style="left:1298px;top:601px" width="12" height="12" viewBox="0 0 12 12" fill="none" stroke="#ddd" stroke-width="1.1"><path d="M6 0V12M0 6H12"/></svg>
<div class="a" style="left:1135px;top:627px;width:129px;height:20px;background:#383838;border-radius:5px;"></div>
<div class="a" style="left:1220px;top:627px;width:1px;height:20px;background:#2c2c2c"></div>
<div class="a" style="left:1139px;top:631px;width:12px;height:12px;background:#3b4a42;border-radius:2px;border:1px solid #4a4a4a;background:#3e4440"></div>
<div class="t" style="left:1155px;top:632.2px;font-size:10px;color:#e6e6e6;font-weight:normal;">0A5C35</div>
<div class="t" style="left:1227px;top:632.2px;font-size:10px;color:#e6e6e6;font-weight:normal;">100</div>
<div class="t" style="left:1252px;top:632.2px;font-size:10px;color:#999;font-weight:normal;">%</div>
<svg style="left:1274px;top:632px" width="12" height="9" viewBox="0 0 12 9" fill="none" stroke="#ddd" stroke-width="1.1"><path d="M.6 4.5Q6 -1.5 11.4 4.5Q6 10.5 .6 4.5Z"/><circle cx="6" cy="4.5" r="1.6"/></svg>
<div class="a" style="left:1298px;top:636.5px;width:11px;height:1.2px;background:#ddd"></div>
<div class="hl" style="left:1123px;top:660px;width:197px"></div>
<div class="t" style="left:1135px;top:672.2px;font-size:10px;color:#eeeeee;font-weight:normal;-webkit-text-stroke:.3px currentColor;;transform:scaleX(0.995);transform-origin:0 50%;">Typography</div>
<svg style="left:1298px;top:671px" width="11" height="11" viewBox="0 0 11 11" fill="none" stroke="#ddd" stroke-width="1"><circle cx="2.5" cy="2.5" r="1.9"/><circle cx="8.5" cy="2.5" r="1.9"/><circle cx="2.5" cy="8.5" r="1.9"/><circle cx="8.5" cy="8.5" r="1.9"/></svg>


</body></html>
